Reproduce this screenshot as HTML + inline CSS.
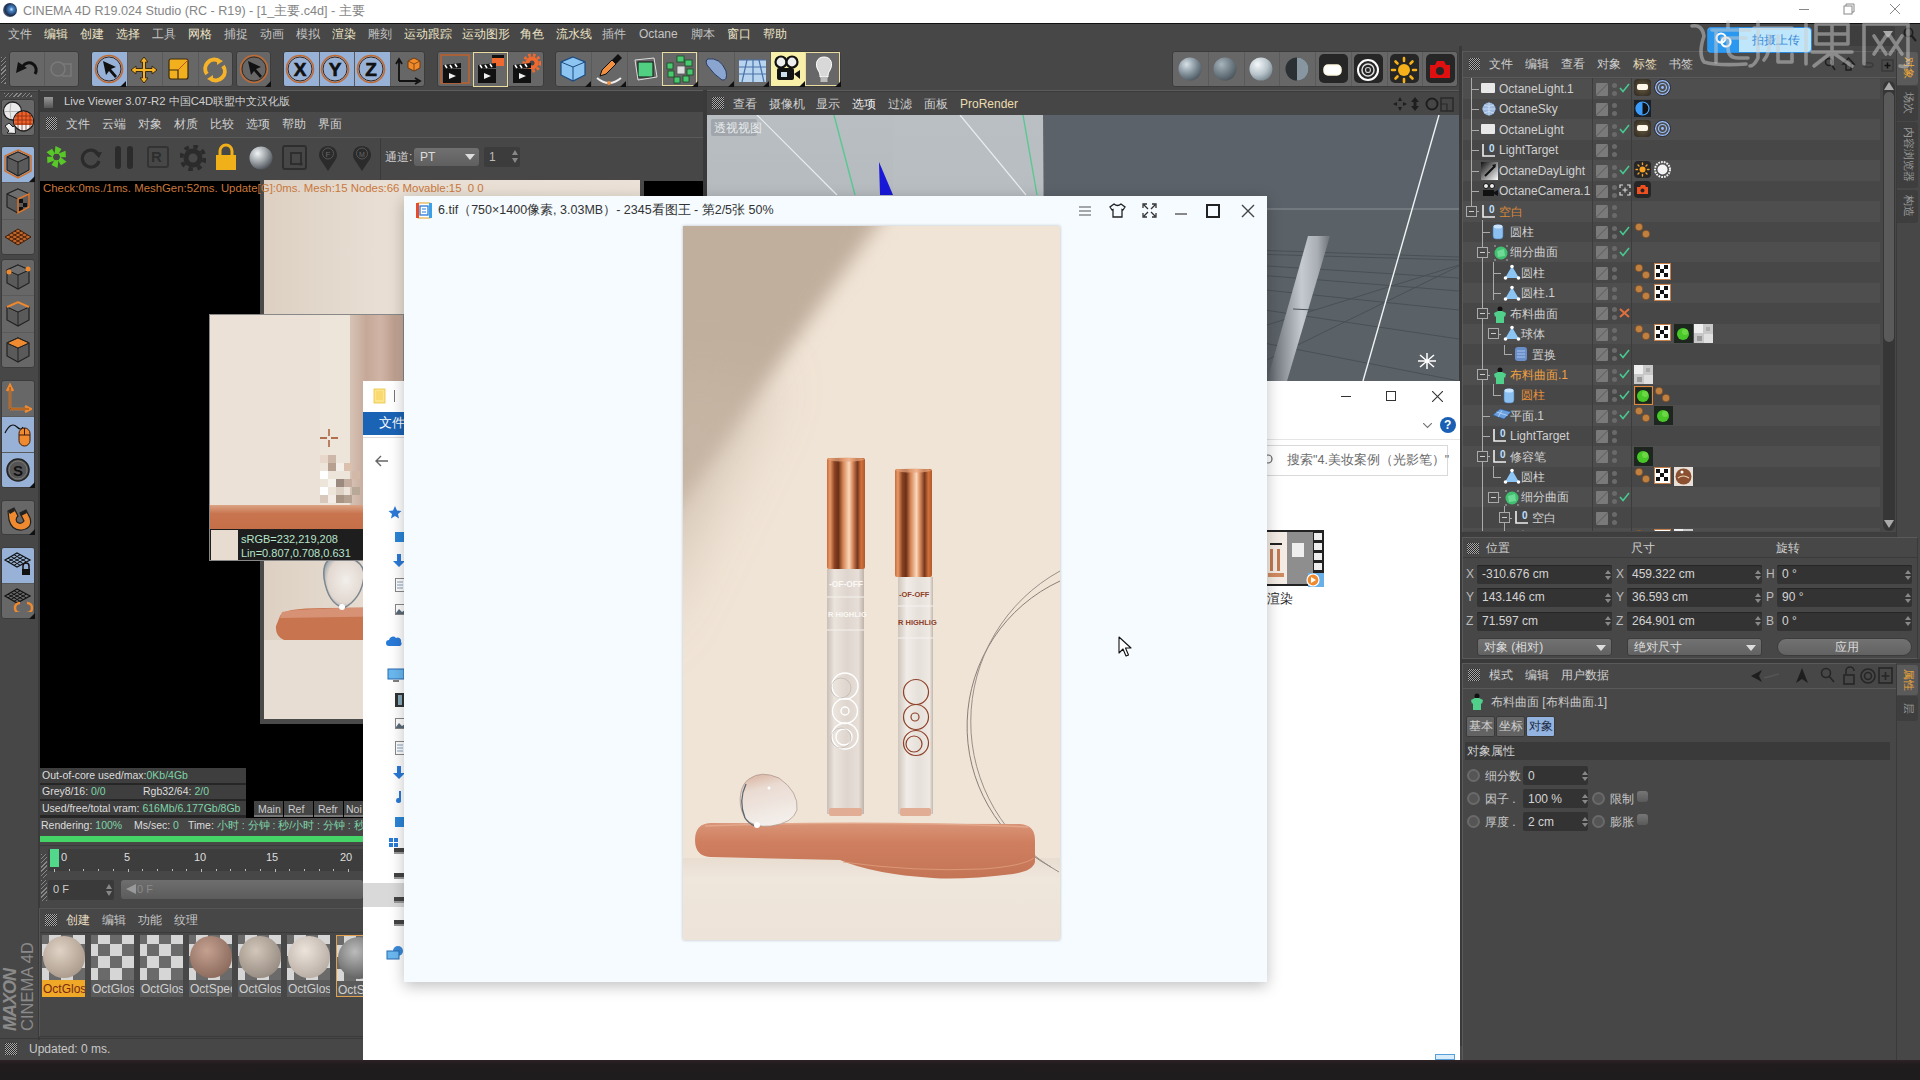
<!DOCTYPE html><html><head><meta charset="utf-8"><style>
*{box-sizing:border-box;margin:0;padding:0}
html,body{width:1920px;height:1080px;overflow:hidden;background:#474747;font-family:"Liberation Sans",sans-serif;}
.a{position:absolute}
.t{position:absolute;white-space:nowrap;line-height:1}
</style></head><body>
<div class="a" style="left:0;top:0;width:1920px;height:23px;background:#fff"></div>
<div class="a" style="left:3px;top:3px;width:14px;height:14px;border-radius:50%;background:radial-gradient(circle at 60% 45%,#cfe6ff 0,#4a86c8 18%,#1a2e50 55%,#7a8088 80%)"></div>
<div class="t" style="left:23px;top:5px;font-size:12.6px;color:#858585">CINEMA 4D R19.024 Studio (RC - R19) - [1_主要.c4d] - 主要</div>
<div class="a" style="left:1799px;top:9px;width:10px;height:1px;background:#888"></div>
<div class="a" style="left:0;top:23px;width:1920px;height:1px;background:#111"></div>
<div class="t" style="left:8px;top:28px;font-size:12px;color:#c4c4c4">文件</div>
<div class="t" style="left:44px;top:28px;font-size:12px;color:#ede4c6">编辑</div>
<div class="t" style="left:80px;top:28px;font-size:12px;color:#ede4c6">创建</div>
<div class="t" style="left:116px;top:28px;font-size:12px;color:#ede4c6">选择</div>
<div class="t" style="left:152px;top:28px;font-size:12px;color:#c4c4c4">工具</div>
<div class="t" style="left:188px;top:28px;font-size:12px;color:#ede4c6">网格</div>
<div class="t" style="left:224px;top:28px;font-size:12px;color:#c4c4c4">捕捉</div>
<div class="t" style="left:260px;top:28px;font-size:12px;color:#c4c4c4">动画</div>
<div class="t" style="left:296px;top:28px;font-size:12px;color:#c4c4c4">模拟</div>
<div class="t" style="left:332px;top:28px;font-size:12px;color:#ede4c6">渲染</div>
<div class="t" style="left:368px;top:28px;font-size:12px;color:#c4c4c4">雕刻</div>
<div class="t" style="left:404px;top:28px;font-size:12px;color:#ede4c6">运动跟踪</div>
<div class="t" style="left:462px;top:28px;font-size:12px;color:#ede4c6">运动图形</div>
<div class="t" style="left:520px;top:28px;font-size:12px;color:#ede4c6">角色</div>
<div class="t" style="left:556px;top:28px;font-size:12px;color:#ede4c6">流水线</div>
<div class="t" style="left:602px;top:28px;font-size:12px;color:#c4c4c4">插件</div>
<div class="t" style="left:639px;top:28px;font-size:12px;color:#c4c4c4">Octane</div>
<div class="t" style="left:691px;top:28px;font-size:12px;color:#c4c4c4">脚本</div>
<div class="t" style="left:727px;top:28px;font-size:12px;color:#ede4c6">窗口</div>
<div class="t" style="left:763px;top:28px;font-size:12px;color:#ede4c6">帮助</div>
<div class="a" style="left:0;top:90px;width:1462px;height:1px;background:#5c5c5c"></div>
<div class="a" style="left:0;top:91px;width:1462px;height:1px;background:#3c3c3c"></div>
<div class="a" style="left:0;top:92px;width:38px;height:948px;background:#474747"></div>
<div class="a" style="left:38px;top:90px;width:2px;height:950px;background:#3a3a3a"></div>
<div class="a" style="left:40px;top:92px;width:663px;height:20px;background:#3b3b3b"></div>
<div class="a" style="left:40px;top:112px;width:663px;height:25px;background:#4a4a4a"></div>
<div class="a" style="left:40px;top:137px;width:663px;height:1px;background:#5a5a5a"></div>
<div class="a" style="left:40px;top:138px;width:663px;height:43px;background:#474747"></div>
<div class="a" style="left:40px;top:181px;width:663px;height:587px;background:#000"></div>
<div class="a" style="left:703px;top:90px;width:4px;height:300px;background:#3a3a3a"></div>
<div class="a" style="left:707px;top:92px;width:752px;height:23px;background:#464646"></div>
<div class="a" style="left:1459px;top:46px;width:3px;height:1000px;background:#3a3a3a"></div>
<div class="a" style="left:1462px;top:52px;width:436px;height:484px;background:#4a4a4a"></div>
<div class="a" style="left:1462px;top:537px;width:436px;height:125px;background:#474747"></div>
<div class="a" style="left:1462px;top:664px;width:436px;height:396px;background:#474747"></div>
<div class="a" style="left:1898px;top:52px;width:22px;height:1008px;background:#3d3d3d"></div>
<div class="a" style="left:40px;top:768px;width:206px;height:50px;background:#262626"></div>
<div class="a" style="left:40px;top:818px;width:323px;height:27px;background:#474747"></div>
<div class="a" style="left:40px;top:845px;width:323px;height:60px;background:#474747"></div>
<div class="a" style="left:40px;top:908px;width:323px;height:130px;background:#474747"></div>
<div class="a" style="left:0;top:1040px;width:363px;height:20px;background:#474747"></div>
<div class="a" style="left:0;top:1060px;width:1920px;height:20px;background:linear-gradient(#2e2326,#201c1e 4px,#1e1c1d)"></div>
<div class="a" style="left:1px;top:57px;width:5px;height:27px;background:repeating-linear-gradient(135deg,#888 0 1px,#444 1px 3px)"></div>
<div class="a" style="left:9px;top:51px;width:70px;height:36px;background:#676767;border:1px solid #3c3c3c;border-radius:3px;overflow:hidden"><div class="a" style="left:-1px;top:-1px;width:35px;height:36px;"></div><div class="a" style="left:34px;top:-1px;width:35px;height:36px;border-left:1px solid #5a5a5a;"></div></div>
<svg class="a" style="left:14px;top:58px" width="26" height="22" viewBox="0 0 26 22"><path d="M21 16 A7 7 0 1 0 9 8" fill="none" stroke="#111" stroke-width="3"/><path d="M2 15 L4 4 L13 10Z" fill="#111"/></svg>
<svg class="a" style="left:48px;top:58px" width="26" height="22" viewBox="0 0 26 22"><g fill="none" stroke="#7a7a7a" stroke-width="1.5"><ellipse cx="10" cy="11" rx="7" ry="7"/><path d="M14 6 h9 v12 h-9"/></g></svg>
<div class="a" style="left:91px;top:51px;width:142.0px;height:36px;background:#676767;border:1px solid #3c3c3c;border-radius:3px;overflow:hidden"><div class="a" style="left:-1.0px;top:-1px;width:35.5px;height:36px;background:#97b2d6;"></div><div class="a" style="left:34.5px;top:-1px;width:35.5px;height:36px;border-left:1px solid #5a5a5a;"></div><div class="a" style="left:70.0px;top:-1px;width:35.5px;height:36px;border-left:1px solid #5a5a5a;"></div><div class="a" style="left:105.5px;top:-1px;width:35.5px;height:36px;border-left:1px solid #5a5a5a;"></div></div>
<svg class="a" style="left:94px;top:54px" width="30" height="30" viewBox="0 0 30 30"><circle cx="15" cy="15" r="13.5" fill="none" stroke="#c06a34" stroke-width="1.6"/><circle cx="15" cy="15" r="12" fill="none" stroke="#3a2a20" stroke-width="1"/><path d="M9 7 L22 13 L17 15 L23 22 L21 24 L15 17 L12 21Z" fill="#111"/></svg>
<svg class="a" style="left:120px;top:81px" width="6" height="6"><path d="M6 0 L6 6 L0 6Z" fill="#111"/></svg>
<svg class="a" style="left:129px;top:55px" width="30" height="30" viewBox="0 0 30 30"><path d="M15 2 L19 7 H16.5 V13.5 H23 V11 L28 15 L23 19 V16.5 H16.5 V23 H19 L15 28 L11 23 H13.5 V16.5 H7 V19 L2 15 L7 11 V13.5 H13.5 V7 H11Z" fill="#f5b32a" stroke="#3a2a10" stroke-width="1"/></svg>
<svg class="a" style="left:168px;top:58px" width="22" height="22" viewBox="0 0 22 22"><rect x="1" y="1" width="19" height="20" rx="2" fill="#f2b01e" stroke="#3a2a10" stroke-width="1.2"/><path d="M1 12 H10 V21" fill="none" stroke="#3a2a10" stroke-width="1.2"/><path d="M10 12 L20 2" stroke="#c0521a" stroke-width="1"/></svg>
<svg class="a" style="left:201px;top:56px" width="28" height="28" viewBox="0 0 28 28"><path d="M6 18 A9 9 0 0 1 18 5" fill="none" stroke="#f5b32a" stroke-width="4"/><path d="M22 10 A9 9 0 0 1 10 23" fill="none" stroke="#f5b32a" stroke-width="4"/><path d="M16 2 L22 5 L16 9Z M12 26 L6 23 L12 19Z" fill="#f5b32a"/></svg>
<div class="a" style="left:236px;top:51px;width:35px;height:36px;background:#676767;border:1px solid #3c3c3c;border-radius:3px;overflow:hidden"><div class="a" style="left:-1px;top:-1px;width:35px;height:36px;"></div></div>
<svg class="a" style="left:239px;top:54px" width="30" height="30" viewBox="0 0 30 30"><circle cx="15" cy="15" r="13.5" fill="none" stroke="#c06a34" stroke-width="1.6"/><circle cx="15" cy="15" r="12" fill="none" stroke="#3a2a20" stroke-width="1"/><path d="M9 7 L22 13 L17 15 L23 22 L21 24 L15 17 L12 21Z" fill="#111"/></svg>
<svg class="a" style="left:265px;top:81px" width="6" height="6"><path d="M6 0 L6 6 L0 6Z" fill="#111"/></svg>
<div class="a" style="left:283px;top:51px;width:142.0px;height:36px;background:#676767;border:1px solid #3c3c3c;border-radius:3px;overflow:hidden"><div class="a" style="left:-1.0px;top:-1px;width:35.5px;height:36px;background:#97b2d6;"></div><div class="a" style="left:34.5px;top:-1px;width:35.5px;height:36px;background:#97b2d6;border-left:1px solid #5a5a5a;"></div><div class="a" style="left:70.0px;top:-1px;width:35.5px;height:36px;background:#97b2d6;border-left:1px solid #5a5a5a;"></div><div class="a" style="left:105.5px;top:-1px;width:35.5px;height:36px;border-left:1px solid #5a5a5a;"></div></div>
<svg class="a" style="left:285px;top:54px" width="30" height="30" viewBox="0 0 30 30"><circle cx="15" cy="15" r="13.5" fill="none" stroke="#c06a34" stroke-width="1.6"/><circle cx="15" cy="15" r="12" fill="none" stroke="#3a2a20" stroke-width="1"/><text x="15" y="22" text-anchor="middle" font-family="Liberation Sans" font-weight="bold" font-size="19" fill="#111" stroke="#111" stroke-width=".6">X</text></svg>
<svg class="a" style="left:320px;top:54px" width="30" height="30" viewBox="0 0 30 30"><circle cx="15" cy="15" r="13.5" fill="none" stroke="#c06a34" stroke-width="1.6"/><circle cx="15" cy="15" r="12" fill="none" stroke="#3a2a20" stroke-width="1"/><text x="15" y="22" text-anchor="middle" font-family="Liberation Sans" font-weight="bold" font-size="19" fill="#111" stroke="#111" stroke-width=".6">Y</text></svg>
<svg class="a" style="left:356px;top:54px" width="30" height="30" viewBox="0 0 30 30"><circle cx="15" cy="15" r="13.5" fill="none" stroke="#c06a34" stroke-width="1.6"/><circle cx="15" cy="15" r="12" fill="none" stroke="#3a2a20" stroke-width="1"/><text x="15" y="22" text-anchor="middle" font-family="Liberation Sans" font-weight="bold" font-size="19" fill="#111" stroke="#111" stroke-width=".6">Z</text></svg>
<svg class="a" style="left:394px;top:55px" width="28" height="30" viewBox="0 0 28 30"><path d="M5 26 V6 M2 9 L5 4 L8 9 M5 26 H24 M21 23 L26 26 L21 29" fill="none" stroke="#111" stroke-width="1.8"/><path d="M14 6 L20 3 L26 6 V13 L20 16 L14 13Z" fill="#f08a2a" stroke="#6a3a10" stroke-width="1"/><path d="M14 6 L20 9 L26 6 M20 9 V16" fill="none" stroke="#6a3a10" stroke-width=".8"/></svg>
<div class="a" style="left:437px;top:51px;width:106.5px;height:36px;background:#676767;border:1px solid #3c3c3c;border-radius:3px;overflow:hidden"><div class="a" style="left:-1.0px;top:-1px;width:35.5px;height:36px;"></div><div class="a" style="left:34.5px;top:-1px;width:35.5px;height:36px;border-left:1px solid #5a5a5a;"></div><div class="a" style="left:70.0px;top:-1px;width:35.5px;height:36px;border-left:1px solid #5a5a5a;"></div></div>
<svg class="a" style="left:439px;top:53px" width="32" height="32" viewBox="0 0 32 32"><rect x="2" y="2" width="28" height="28" fill="none" stroke="#c0602c" stroke-width="1.5"/></svg>
<svg class="a" style="left:441px;top:60px" width="24" height="24" viewBox="0 0 24 24"><rect x="2" y="9" width="18" height="14" fill="#111"/><path d="M2 5 L20 3 L20 8 L2 9Z" fill="#111"/><path d="M4 5 L6 8 M9 5 L11 8 M14 4 L16 7" stroke="#fff" stroke-width="1.6"/><path d="M8 13 L15 16 L8 19Z" fill="#eee"/></svg>
<div class="a" style="left:473px;top:52px;width:35px;height:35px;border:1px solid #e8dca0"></div>
<svg class="a" style="left:478px;top:54px" width="28" height="32" viewBox="0 0 28 32"><rect x="14" y="2" width="12" height="10" fill="#f06a30"/><rect x="14" y="1" width="12" height="3" fill="#111"/></svg>
<svg class="a" style="left:476px;top:60px" width="24" height="24" viewBox="0 0 24 24"><rect x="2" y="9" width="18" height="14" fill="#111"/><path d="M2 5 L20 3 L20 8 L2 9Z" fill="#111"/><path d="M4 5 L6 8 M9 5 L11 8 M14 4 L16 7" stroke="#fff" stroke-width="1.6"/><path d="M8 13 L15 16 L8 19Z" fill="#eee"/></svg>
<svg class="a" style="left:513px;top:53px" width="28" height="28" viewBox="0 0 28 28"><circle cx="19" cy="10" r="6.5" fill="#f06a30"/><circle cx="19" cy="10" r="8" fill="none" stroke="#f06a30" stroke-width="3" stroke-dasharray="2.6 2.2"/><circle cx="19" cy="10" r="2.5" fill="#474747"/></svg>
<svg class="a" style="left:511px;top:60px" width="24" height="24" viewBox="0 0 24 24"><rect x="2" y="9" width="18" height="14" fill="#111"/><path d="M2 5 L20 3 L20 8 L2 9Z" fill="#111"/><path d="M4 5 L6 8 M9 5 L11 8 M14 4 L16 7" stroke="#fff" stroke-width="1.6"/><path d="M8 13 L15 16 L8 19Z" fill="#eee"/></svg>
<div class="a" style="left:555px;top:51px;width:286.0px;height:36px;background:#676767;border:1px solid #3c3c3c;border-radius:3px;overflow:hidden"><div class="a" style="left:-1.0px;top:-1px;width:35.75px;height:36px;"></div><div class="a" style="left:34.75px;top:-1px;width:35.75px;height:36px;border-left:1px solid #5a5a5a;"></div><div class="a" style="left:70.5px;top:-1px;width:35.75px;height:36px;border-left:1px solid #5a5a5a;"></div><div class="a" style="left:106.25px;top:-1px;width:35.75px;height:36px;border-left:1px solid #5a5a5a;"></div><div class="a" style="left:142.0px;top:-1px;width:35.75px;height:36px;border-left:1px solid #5a5a5a;"></div><div class="a" style="left:177.75px;top:-1px;width:35.75px;height:36px;border-left:1px solid #5a5a5a;"></div><div class="a" style="left:213.5px;top:-1px;width:35.75px;height:36px;background:#f8f0a8;border-left:1px solid #5a5a5a;"></div><div class="a" style="left:249.25px;top:-1px;width:35.75px;height:36px;border-left:1px solid #5a5a5a;"></div></div>
<div class="a" style="left:662px;top:52px;width:35px;height:34px;border:1px solid #e8dca0"></div>
<div class="a" style="left:805px;top:52px;width:35px;height:34px;border:1px solid #e8dca0"></div>
<svg class="a" style="left:559px;top:55px" width="28" height="28" viewBox="0 0 28 28"><path d="M14 2 L26 7 V20 L14 26 L2 20 V7Z" fill="#8cc4f2" stroke="#1a4a80" stroke-width="1.2"/><path d="M2 7 L14 12 L26 7 M14 12 V26" fill="none" stroke="#1a4a80" stroke-width="1"/></svg>
<svg class="a" style="left:594px;top:54px" width="30" height="32" viewBox="0 0 30 32"><path d="M8 16 L18 6 L22 10 L12 20 L6 22Z" fill="#f09040" stroke="#111" stroke-width="1"/><path d="M18 6 L24 0 L28 4 L22 10Z" fill="#111"/><path d="M3 24 Q15 34 27 24" fill="none" stroke="#eee" stroke-width="2"/><circle cx="15" cy="29" r="2" fill="#f09040"/></svg>
<svg class="a" style="left:632px;top:55px" width="28" height="28" viewBox="0 0 28 28"><rect x="6" y="7" width="15" height="15" fill="#50d080" stroke="#111" stroke-width="1"/><path d="M3 5 L22 3 L25 22 L6 25Z" fill="none" stroke="#ddd" stroke-width="1"/></svg>
<svg class="a" style="left:665px;top:54px" width="30" height="32" viewBox="0 0 30 32"><g fill="#48c870" stroke="#1a4a20" stroke-width=".8"><rect x="12" y="2" width="7" height="6"/><rect x="20" y="6" width="7" height="6"/><rect x="22" y="15" width="6" height="6"/><rect x="18" y="22" width="6" height="6"/><rect x="9" y="23" width="6" height="6"/><rect x="3" y="17" width="6" height="6"/><rect x="2" y="9" width="6" height="6"/></g><rect x="12" y="12" width="8" height="8" fill="#ddd" stroke="#555" stroke-width=".8"/></svg>
<svg class="a" style="left:702px;top:55px" width="28" height="28" viewBox="0 0 28 28"><path d="M6 4 Q18 2 24 16 Q26 26 20 25 Q12 20 5 10 Q3 5 6 4Z" fill="#8aa6d0" stroke="#2a3a60" stroke-width="1"/></svg>
<svg class="a" style="left:738px;top:56px" width="30" height="28" viewBox="0 0 30 28"><rect x="1" y="4" width="27" height="22" fill="#b9d4ef"/><g stroke="#4a72a8" stroke-width="1.2" fill="none"><path d="M1 4 H28 M1 11 H28 M1 18 H28 M9 4 L4 26 M15 4 V26 M21 4 L26 26"/></g></svg>
<svg class="a" style="left:772px;top:55px" width="30" height="30" viewBox="0 0 30 30"><circle cx="9" cy="7" r="5.5" fill="#eee" stroke="#111" stroke-width="2.2"/><circle cx="20" cy="7" r="5.5" fill="#eee" stroke="#111" stroke-width="2.2"/><rect x="5" y="13" width="17" height="12" rx="2" fill="#111"/><path d="M22 19 L28 15 V24Z" fill="#111"/><rect x="9" y="17" width="6" height="5" fill="#cde"/></svg>
<svg class="a" style="left:812px;top:55px" width="24" height="30" viewBox="0 0 24 30"><path d="M12 2 C4 2 3 10 6 15 C8 18 8 20 8 22 H16 C16 20 16 18 18 15 C21 10 20 2 12 2Z" fill="#d8d8d8" stroke="#fff" stroke-width="1"/><rect x="8.5" y="22" width="7" height="5" fill="#bbb"/></svg>
<svg class="a" style="left:620px;top:81px" width="6" height="6"><path d="M6 0 L6 6 L0 6Z" fill="#111"/></svg>
<svg class="a" style="left:692px;top:81px" width="6" height="6"><path d="M6 0 L6 6 L0 6Z" fill="#111"/></svg>
<svg class="a" style="left:728px;top:81px" width="6" height="6"><path d="M6 0 L6 6 L0 6Z" fill="#111"/></svg>
<svg class="a" style="left:763px;top:81px" width="6" height="6"><path d="M6 0 L6 6 L0 6Z" fill="#111"/></svg>
<svg class="a" style="left:799px;top:81px" width="6" height="6"><path d="M6 0 L6 6 L0 6Z" fill="#111"/></svg>
<svg class="a" style="left:835px;top:81px" width="6" height="6"><path d="M6 0 L6 6 L0 6Z" fill="#111"/></svg>
<svg class="a" style="left:585px;top:81px" width="6" height="6"><path d="M6 0 L6 6 L0 6Z" fill="#111"/></svg>
<div class="a" style="left:1172px;top:51px;width:286.0px;height:36px;background:#676767;border:1px solid #3c3c3c;border-radius:3px;overflow:hidden"><div class="a" style="left:-1.0px;top:-1px;width:35.75px;height:36px;"></div><div class="a" style="left:34.75px;top:-1px;width:35.75px;height:36px;border-left:1px solid #5a5a5a;"></div><div class="a" style="left:70.5px;top:-1px;width:35.75px;height:36px;border-left:1px solid #5a5a5a;"></div><div class="a" style="left:106.25px;top:-1px;width:35.75px;height:36px;border-left:1px solid #5a5a5a;"></div><div class="a" style="left:142.0px;top:-1px;width:35.75px;height:36px;border-left:1px solid #5a5a5a;"></div><div class="a" style="left:177.75px;top:-1px;width:35.75px;height:36px;border-left:1px solid #5a5a5a;"></div><div class="a" style="left:213.5px;top:-1px;width:35.75px;height:36px;border-left:1px solid #5a5a5a;"></div><div class="a" style="left:249.25px;top:-1px;width:35.75px;height:36px;border-left:1px solid #5a5a5a;"></div></div>
<svg class="a" style="left:1177px;top:56px" width="26" height="26" viewBox="0 0 26 26"><defs><radialGradient id="s1177" cx=".35" cy=".3" r=".75"><stop offset="0" stop-color="#d6e0e6"/><stop offset=".6" stop-color="#7e8c96"/><stop offset="1" stop-color="#4d5860"/></radialGradient></defs><circle cx="13" cy="13" r="11.5" fill="url(#s1177)"/></svg>
<svg class="a" style="left:1212px;top:56px" width="26" height="26" viewBox="0 0 26 26"><defs><radialGradient id="s1212" cx=".35" cy=".3" r=".75"><stop offset="0" stop-color="#a8b4bc"/><stop offset=".6" stop-color="#6f7b84"/><stop offset="1" stop-color="#4a545b"/></radialGradient></defs><circle cx="13" cy="13" r="11.5" fill="url(#s1212)"/></svg>
<svg class="a" style="left:1248px;top:56px" width="26" height="26" viewBox="0 0 26 26"><defs><radialGradient id="s1248" cx=".35" cy=".3" r=".75"><stop offset="0" stop-color="#f4f8fa"/><stop offset=".6" stop-color="#b8c4ca"/><stop offset="1" stop-color="#7a8890"/></radialGradient></defs><circle cx="13" cy="13" r="11.5" fill="url(#s1248)"/></svg>
<svg class="a" style="left:1284px;top:56px" width="26" height="26" viewBox="0 0 26 26"><circle cx="13" cy="13" r="11.5" fill="#2a3034"/><path d="M13 1.5 A11.5 11.5 0 0 1 13 24.5Z" fill="#8796a0"/></svg>
<div class="a" style="left:1318.5px;top:54px;width:29px;height:29px;border-radius:5px;background:#262626"></div>
<div class="a" style="left:1354.2px;top:54px;width:29px;height:29px;border-radius:5px;background:#262626"></div>
<div class="a" style="left:1390.0px;top:54px;width:29px;height:29px;border-radius:5px;background:#262626"></div>
<div class="a" style="left:1425.8px;top:54px;width:29px;height:29px;border-radius:5px;background:#262626"></div>
<svg class="a" style="left:1318px;top:60px" width="30" height="20" viewBox="0 0 30 20"><rect x="6" y="5" width="17" height="10" rx="4" fill="#fff" stroke="#fff8e0" stroke-width="1.5"/></svg>
<svg class="a" style="left:1354px;top:56px" width="28" height="28" viewBox="0 0 28 28"><circle cx="14" cy="14" r="10" fill="none" stroke="#fff" stroke-width="2"/><circle cx="14" cy="14" r="6" fill="none" stroke="#ddd" stroke-width="1.5"/><circle cx="14" cy="14" r="2.5" fill="none" stroke="#ccc" stroke-width="1.2"/></svg>
<svg class="a" style="left:1390px;top:56px" width="28" height="28" viewBox="0 0 28 28"><circle cx="14" cy="14" r="6" fill="#f5b01a"/><g stroke="#f5b01a" stroke-width="2.6" stroke-linecap="round"><path d="M14 2 V5 M14 23 V26 M2 14 H5 M23 14 H26 M5.5 5.5 L7.5 7.5 M20.5 20.5 L22.5 22.5 M5.5 22.5 L7.5 20.5 M20.5 7.5 L22.5 5.5"/></g></svg>
<svg class="a" style="left:1426px;top:56px" width="28" height="28" viewBox="0 0 28 28"><path d="M4 9 H9 L11 5 H18 L20 9 H24 V22 H4Z" fill="#e01010"/><circle cx="14" cy="15" r="4" fill="#262626"/></svg>
<div class="a" style="left:44px;top:97px;width:9px;height:11px;background:linear-gradient(#999,#555)"></div>
<div class="t" style="left:64px;top:96px;font-size:11.3px;color:#cfcfcf">Live Viewer 3.07-R2 中国C4D联盟中文汉化版</div>
<div class="a" style="left:46px;top:117px;width:11px;height:13px;background:repeating-conic-gradient(#a8a8a8 0 25%,#262626 0 50%) 0 0/2px 2px"></div>
<div class="t" style="left:66px;top:118px;font-size:12px;color:#cfcfcf">文件</div>
<div class="t" style="left:102px;top:118px;font-size:12px;color:#cfcfcf">云端</div>
<div class="t" style="left:138px;top:118px;font-size:12px;color:#cfcfcf">对象</div>
<div class="t" style="left:174px;top:118px;font-size:12px;color:#cfcfcf">材质</div>
<div class="t" style="left:210px;top:118px;font-size:12px;color:#cfcfcf">比较</div>
<div class="t" style="left:246px;top:118px;font-size:12px;color:#cfcfcf">选项</div>
<div class="t" style="left:282px;top:118px;font-size:12px;color:#cfcfcf">帮助</div>
<div class="t" style="left:318px;top:118px;font-size:12px;color:#cfcfcf">界面</div>
<svg class="a" style="left:44px;top:144px" width="25" height="26" viewBox="0 0 25 26"><g transform="translate(0.5,1)"><g transform="rotate(0 12 12)"><path d="M10 9 L11 1 L17 4 L14 9Z" fill="#58c828"/></g><g transform="rotate(60 12 12)"><path d="M10 9 L11 1 L17 4 L14 9Z" fill="#58c828"/></g><g transform="rotate(120 12 12)"><path d="M10 9 L11 1 L17 4 L14 9Z" fill="#58c828"/></g><g transform="rotate(180 12 12)"><path d="M10 9 L11 1 L17 4 L14 9Z" fill="#58c828"/></g><g transform="rotate(240 12 12)"><path d="M10 9 L11 1 L17 4 L14 9Z" fill="#58c828"/></g><g transform="rotate(300 12 12)"><path d="M10 9 L11 1 L17 4 L14 9Z" fill="#58c828"/></g><circle cx="12" cy="12" r="3.2" fill="#474747"/></g></svg>
<svg class="a" style="left:79px;top:146px" width="24" height="23" viewBox="0 0 24 23"><path d="M19 8 A8.5 8.5 0 1 0 20 15" fill="none" stroke="#2b2b2b" stroke-width="3.2"/><path d="M15 7 L23 6 L20 12Z" fill="#2b2b2b"/></svg>
<div class="a" style="left:115px;top:146px;width:6px;height:23px;border-radius:3px;background:#2b2b2b"></div>
<div class="a" style="left:127px;top:146px;width:6px;height:23px;border-radius:3px;background:#2b2b2b"></div>
<div class="a" style="left:147px;top:146px;width:22px;height:22px;border:2px solid #333;border-radius:3px"></div>
<div class="t" style="left:151px;top:149px;font-size:15px;font-weight:bold;color:#2e2e2e">R</div>
<svg class="a" style="left:180px;top:145px" width="26" height="26" viewBox="0 0 26 26"><circle cx="13" cy="13" r="9.5" fill="#2b2b2b"/><circle cx="13" cy="13" r="11.5" fill="none" stroke="#2b2b2b" stroke-width="4" stroke-dasharray="4.5 4.53"/><circle cx="13" cy="13" r="4.5" fill="#474747"/></svg>
<svg class="a" style="left:214px;top:143px" width="24" height="28" viewBox="0 0 24 28"><path d="M6 12 V8 A6 6 0 0 1 18 8 V12" fill="none" stroke="#f0b01a" stroke-width="3"/><rect x="2" y="12" width="20" height="15" fill="#f0b01a"/></svg>
<svg class="a" style="left:248px;top:145px" width="26" height="26" viewBox="0 0 26 26"><defs><radialGradient id="s248" cx=".35" cy=".3" r=".75"><stop offset="0" stop-color="#f2f4f6"/><stop offset=".5" stop-color="#a0a6aa"/><stop offset="1" stop-color="#4a5056"/></radialGradient></defs><circle cx="13" cy="13" r="11.5" fill="url(#s248)"/></svg>
<div class="a" style="left:282px;top:145px;width:25px;height:25px;border:2px solid #2e2e2e;border-radius:3px"></div>
<svg class="a" style="left:282px;top:145px" width="25" height="25" viewBox="0 0 25 25"><path d="M9 8 H19 V19 H9Z" fill="none" stroke="#2e2e2e" stroke-width="2"/><circle cx="19" cy="19" r="1.8" fill="#2e2e2e"/></svg>
<svg class="a" style="left:317px;top:144px" width="22" height="28" viewBox="0 0 22 28"><path d="M11 27 L3 15 A9 9 0 1 1 19 15Z" fill="#2b2b2b"/><circle cx="11" cy="9.5" r="5.5" fill="none" stroke="#555" stroke-width="1"/><text x="11" y="13" text-anchor="middle" font-family="Liberation Sans" font-size="8" fill="#666">F</text></svg>
<svg class="a" style="left:351px;top:144px" width="22" height="28" viewBox="0 0 22 28"><path d="M11 27 L3 15 A9 9 0 1 1 19 15Z" fill="#2b2b2b"/><circle cx="11" cy="9.5" r="5.5" fill="none" stroke="#555" stroke-width="1"/><text x="11" y="12.5" text-anchor="middle" font-family="Liberation Sans" font-size="7" fill="#666">M</text></svg>
<div class="a" style="left:380px;top:138px;width:1px;height:42px;background:#3a3a3a"></div>
<div class="t" style="left:385px;top:151px;font-size:12px;color:#cfcfcf">通道:</div>
<div class="a" style="left:414px;top:148px;width:65px;height:18px;border-radius:3px;background:linear-gradient(#707070,#5f5f5f)"></div>
<div class="t" style="left:420px;top:151px;font-size:12px;color:#ddd">PT</div>
<svg class="a" style="left:465px;top:154px" width="10" height="6" viewBox="0 0 10 6"><path d="M0 0 H10 L5 6Z" fill="#ddd"/></svg>
<div class="a" style="left:484px;top:147px;width:36px;height:20px;border-radius:2px;background:#3c3c3c"></div>
<div class="t" style="left:489px;top:151px;font-size:12px;color:#bbb">1</div>
<svg class="a" style="left:512px;top:150px" width="6" height="13" viewBox="0 0 6 13"><path d="M0 5 L3 0 L6 5Z M0 8 L3 13 L6 8Z" fill="#888"/></svg>
<div class="a" style="left:4px;top:93px;width:28px;height:4px;background:repeating-linear-gradient(135deg,#888 0 1px,#444 1px 3px)"></div>
<div class="a" style="left:1px;top:99px;width:34px;height:36.5px;background:#676767;border:1px solid #3c3c3c;border-radius:3px;overflow:hidden"><div class="a" style="left:-1px;top:-1.0px;width:34px;height:36.5px;"></div></div>
<svg class="a" style="left:1px;top:99px" width="34" height="36" viewBox="0 0 34 36"><defs><clipPath id="osc"><circle cx="22.5" cy="22" r="9.5"/></clipPath></defs><circle cx="11.5" cy="12" r="9" fill="#eaeaea" stroke="#1e1e1e" stroke-width="1.3"/><path d="M10 3.5 Q8 12 10 20 M3 12.5 H20" stroke="#aaa" stroke-width=".8" fill="none"/><path d="M4 27 L8 24 L12 28 L14 26 L14.5 34.5 L6 34 L8 32Z" fill="#eee" stroke="#222" stroke-width="1"/><circle cx="22.5" cy="22" r="10" fill="#f2f2f2" stroke="#1e1e1e" stroke-width="1.3"/><g clip-path="url(#osc)"><rect x="12" y="12" width="21" height="14" fill="#f0602a"/><path d="M17 12 V32 M21 12 V32 M25 12 V32 M29 12 V32 M12 17 H33 M12 21 H33 M12 25 H33" stroke="#7a2a10" stroke-width=".7"/></g></svg>
<div class="a" style="left:1px;top:146px;width:34px;height:108.89999999999999px;background:#676767;border:1px solid #3c3c3c;border-radius:3px;overflow:hidden"><div class="a" style="left:-1px;top:-1.0px;width:34px;height:36.3px;background:#97b2d6;"></div><div class="a" style="left:-1px;top:35.3px;width:34px;height:36.3px;border-top:1px solid #5a5a5a;"></div><div class="a" style="left:-1px;top:71.6px;width:34px;height:36.3px;border-top:1px solid #5a5a5a;"></div></div>
<svg class="a" style="left:4px;top:149px" width="28" height="30" viewBox="0 0 28 30"><path d="M14 3 L25 8 V21 L14 27 L3 21 V8Z" fill="#5a5a5a" stroke="#222" stroke-width="1.2"/><path d="M3 8 L14 13 L25 8 M14 13 V27" fill="none" stroke="#222" stroke-width="1"/><path d="M3 8 L14 3 L25 8 L14 13Z" fill="#6e6e6e" stroke="#222" stroke-width="1"/><path d="M14 1 L27 7 V22 L14 29 L1 22 V7Z" fill="none" stroke="#d0702c" stroke-width="1.5"/></svg>
<svg class="a" style="left:29px;top:176px" width="6" height="6"><path d="M6 0 L6 6 L0 6Z" fill="#111"/></svg>
<svg class="a" style="left:4px;top:186px" width="28" height="30" viewBox="0 0 28 30"><path d="M14 3 L25 8 V21 L14 27 L3 21 V8Z" fill="#5a5a5a" stroke="#222" stroke-width="1.2"/><path d="M3 8 L14 13 L25 8 M14 13 V27" fill="none" stroke="#222" stroke-width="1"/><path d="M3 8 L14 3 L25 8 L14 13Z" fill="#6e6e6e" stroke="#222" stroke-width="1"/><g fill="#111"><rect x="15" y="13" width="4" height="4"/><rect x="19" y="17" width="4" height="4"/><rect x="15" y="21" width="4" height="4"/></g><path d="M14 13 L25 8 V21 L14 27Z" fill="none" stroke="#e07a30" stroke-width="1.5"/></svg>
<svg class="a" style="left:3px;top:224px" width="30" height="26" viewBox="0 0 30 26"><path d="M2 13 L15 5 L28 13 L15 21Z" fill="#c06428" stroke="#3a1a08" stroke-width="1"/><g stroke="#3a1a08" stroke-width=".9"><path d="M5.2 11 L18.2 19 M8.5 9 L21.5 17 M11.7 7 L24.7 15 M5.2 15 L18.2 7 M8.5 17 L21.5 9 M11.7 19 L24.7 11"/></g></svg>
<div class="a" style="left:1px;top:259px;width:34px;height:108.89999999999999px;background:#676767;border:1px solid #3c3c3c;border-radius:3px;overflow:hidden"><div class="a" style="left:-1px;top:-1.0px;width:34px;height:36.3px;"></div><div class="a" style="left:-1px;top:35.3px;width:34px;height:36.3px;border-top:1px solid #5a5a5a;"></div><div class="a" style="left:-1px;top:71.6px;width:34px;height:36.3px;border-top:1px solid #5a5a5a;"></div></div>
<svg class="a" style="left:4px;top:262px" width="28" height="30" viewBox="0 0 28 30"><path d="M14 3 L25 8 V21 L14 27 L3 21 V8Z" fill="#5a5a5a" stroke="#222" stroke-width="1.2"/><path d="M3 8 L14 13 L25 8 M14 13 V27" fill="none" stroke="#222" stroke-width="1"/><path d="M3 8 L14 3 L25 8 L14 13Z" fill="#6e6e6e" stroke="#222" stroke-width="1"/><circle cx="5" cy="10" r="2.5" fill="#f08a30"/><circle cx="24" cy="7" r="2.5" fill="#f08a30"/></svg>
<svg class="a" style="left:4px;top:299px" width="28" height="30" viewBox="0 0 28 30"><path d="M14 3 L25 8 V21 L14 27 L3 21 V8Z" fill="#5a5a5a" stroke="#222" stroke-width="1.2"/><path d="M3 8 L14 13 L25 8 M14 13 V27" fill="none" stroke="#222" stroke-width="1"/><path d="M3 8 L14 3 L25 8 L14 13Z" fill="#6e6e6e" stroke="#222" stroke-width="1"/><path d="M3 8 L14 3 L25 8" fill="none" stroke="#f08a30" stroke-width="2"/></svg>
<svg class="a" style="left:4px;top:335px" width="28" height="30" viewBox="0 0 28 30"><path d="M14 3 L25 8 V21 L14 27 L3 21 V8Z" fill="#5a5a5a" stroke="#222" stroke-width="1.2"/><path d="M3 8 L14 13 L25 8 M14 13 V27" fill="none" stroke="#222" stroke-width="1"/><path d="M3 8 L14 3 L25 8 L14 13Z" fill="#6e6e6e" stroke="#222" stroke-width="1"/><path d="M3 8 L14 3 L25 8 L14 13Z" fill="#f08a30" stroke="#222" stroke-width="1"/></svg>
<div class="a" style="left:1px;top:380px;width:34px;height:108px;background:#676767;border:1px solid #3c3c3c;border-radius:3px;overflow:hidden"><div class="a" style="left:-1px;top:-1px;width:34px;height:36px;"></div><div class="a" style="left:-1px;top:35px;width:34px;height:36px;background:#97b2d6;border-top:1px solid #5a5a5a;"></div><div class="a" style="left:-1px;top:71px;width:34px;height:36px;background:#97b2d6;border-top:1px solid #5a5a5a;"></div></div>
<svg class="a" style="left:4px;top:383px" width="28" height="30" viewBox="0 0 28 30"><path d="M6 26 V4 M3 8 L6 2 L9 8 M6 26 H25 M21 23 L27 26 L21 29" fill="none" stroke="#f08a30" stroke-width="2.4"/><path d="M6 26 V4 M6 26 H25" fill="none" stroke="#3a1a08" stroke-width=".6"/></svg>
<svg class="a" style="left:3px;top:419px" width="30" height="30" viewBox="0 0 30 30"><path d="M2 14 Q8 2 14 8 Q18 12 20 8" fill="none" stroke="#111" stroke-width="1.2"/><rect x="16" y="9" width="11" height="18" rx="5.5" fill="#f08a30" stroke="#3a1a08" stroke-width="1"/><path d="M21.5 9 V16 M16 16 H27" stroke="#3a1a08" stroke-width="1"/></svg>
<svg class="a" style="left:4px;top:455px" width="28" height="30" viewBox="0 0 28 30"><circle cx="14" cy="15" r="11" fill="#555" stroke="#222" stroke-width="1.5"/><circle cx="14" cy="15" r="9" fill="none" stroke="#777" stroke-width="1"/><text x="14" y="21" text-anchor="middle" font-family="Liberation Sans" font-weight="bold" font-size="15" fill="#111">S</text></svg>
<svg class="a" style="left:29px;top:482px" width="6" height="6"><path d="M6 0 L6 6 L0 6Z" fill="#111"/></svg>
<div class="a" style="left:1px;top:500px;width:34px;height:35px;background:#676767;border:1px solid #3c3c3c;border-radius:3px;overflow:hidden"><div class="a" style="left:-1px;top:-1px;width:34px;height:35px;"></div></div>
<svg class="a" style="left:4px;top:503px" width="28" height="28" viewBox="0 0 28 28"><path d="M4 8 L10 5 L14 13 Q11 16 13 19 Q17 22 20 18 L16 10 L22 7 L26 15 Q29 25 18 27 Q8 28 5 17Z" fill="#f08a30" stroke="#222" stroke-width="1.2"/><path d="M4 8 L10 5 L11 8 L6 11Z M22 7 L16 10 L17 13 L23 10Z" fill="#222"/></svg>
<svg class="a" style="left:29px;top:529px" width="6" height="6"><path d="M6 0 L6 6 L0 6Z" fill="#111"/></svg>
<div class="a" style="left:1px;top:547px;width:34px;height:72px;background:#676767;border:1px solid #3c3c3c;border-radius:3px;overflow:hidden"><div class="a" style="left:-1px;top:-1px;width:34px;height:36px;background:#97b2d6;"></div><div class="a" style="left:-1px;top:35px;width:34px;height:36px;border-top:1px solid #5a5a5a;"></div></div>
<svg class="a" style="left:3px;top:550px" width="30" height="26" viewBox="0 0 30 26"><path d="M2 10 L14 3 L27 10 L14 17Z" fill="none" stroke="#111" stroke-width="1.2"/><g stroke="#111" stroke-width="1"><path d="M5 8.2 L17 15.2 M8 6.5 L20 13.5 M11 4.7 L23 11.7 M5 11.8 L17 4.8 M8 13.5 L20 6.5 M11 15.3 L23 8.3"/></g><rect x="19" y="19" width="8" height="6" fill="#111"/><path d="M20 19 V16 A3 3 0 0 1 26 16 V19" fill="none" stroke="#111" stroke-width="1.5"/></svg>
<svg class="a" style="left:3px;top:586px" width="30" height="26" viewBox="0 0 30 26"><path d="M2 10 L14 3 L27 10 L14 17Z" fill="none" stroke="#111" stroke-width="1.2"/><g stroke="#111" stroke-width="1"><path d="M5 8.2 L17 15.2 M8 6.5 L20 13.5 M11 4.7 L23 11.7 M5 11.8 L17 4.8 M8 13.5 L20 6.5 M11 15.3 L23 8.3"/></g><path d="M17 17 A5 5 0 0 0 17 27 M24 17 A5 5 0 0 1 24 27" fill="none" stroke="#f08a30" stroke-width="2.5"/></svg>
<svg class="a" style="left:29px;top:613px" width="6" height="6"><path d="M6 0 L6 6 L0 6Z" fill="#111"/></svg>
<div class="t" style="left:1px;top:1031px;transform:rotate(-90deg);transform-origin:0 0;font-size:18px;font-weight:bold;font-style:italic;color:#8a8a8a;letter-spacing:-1px;line-height:18px">MAXON</div>
<div class="t" style="left:19px;top:1031px;transform:rotate(-90deg);transform-origin:0 0;font-size:16.5px;color:#8a8a8a;line-height:17px">CINEMA 4D</div>
<div class="a" style="left:260px;top:180px;width:384px;height:544px;background:#4a4a4a"></div>
<svg class="a" style="left:264px;top:180px" width="376" height="539" viewBox="0 0 376 539"><defs><linearGradient id="rimg" x1="0" y1="0" x2="1" y2="0"><stop offset="0" stop-color="#ddd0c3"/><stop offset=".3" stop-color="#e8ded3"/><stop offset="1" stop-color="#ebe1d6"/></linearGradient><radialGradient id="rdrop" cx=".55" cy=".45" r=".6"><stop offset="0" stop-color="#f2eeea"/><stop offset=".75" stop-color="#e2d8d0"/><stop offset="1" stop-color="#9aa4ac"/></radialGradient></defs><rect width="376" height="539" fill="url(#rimg)"/><rect x="0" y="460" width="376" height="79" fill="#e7ddd3"/><path d="M16 436 Q18 428 60 428 L376 426 L376 460 L20 460 Q11 456 12 446Z" fill="#c8754f"/><path d="M18 432 Q40 426 376 424 L376 432 L16 438Z" fill="#d79276"/><path d="M60 398 Q58 378 72 378 Q100 376 100 396 Q98 418 80 428 Q64 424 60 398Z" fill="url(#rdrop)" stroke="#7a8690" stroke-width="1.5"/><circle cx="78" cy="427" r="3" fill="#fff"/></svg>
<div class="t" style="left:43px;top:183px;font-size:11.4px;color:#c8783c">Check:0ms./1ms. MeshGen:52ms. Update[G]:0ms. Mesh:15 Nodes:66 Movable:15 &nbsp;0 0</div>
<div class="a" style="left:209px;top:314px;width:195px;height:247px;background:#ebe1d6;border:1px solid #888;overflow:hidden"><div class="a" style="left:110px;top:0;width:32px;height:193px;background:#ede4da"></div><div class="a" style="left:140px;top:0;width:55px;height:193px;background:linear-gradient(90deg,#d6c3b6,#c6a898 30%,#d0b4a5 55%,#bea090 80%,#c8ad9e)"></div><div class="a" style="left:0;top:190px;width:195px;height:25px;background:linear-gradient(#dba486,#c8744e 35%,#c56f48)"></div></div>
<svg class="a" style="left:318px;top:427px" width="22" height="22" viewBox="0 0 22 22"><path d="M11 2 V9 M11 13 V20 M2 11 H9 M13 11 H20" stroke="#a04a20" stroke-width="1.3"/></svg>
<div class="a" style="left:320px;top:455px;width:8px;height:8px;background:#e8d8cc"></div>
<div class="a" style="left:328px;top:455px;width:8px;height:8px;background:#cdb7a8"></div>
<div class="a" style="left:336px;top:463px;width:8px;height:8px;background:#f4eee8"></div>
<div class="a" style="left:328px;top:463px;width:8px;height:8px;background:#b8a090"></div>
<div class="a" style="left:344px;top:463px;width:8px;height:8px;background:#dcc0ae"></div>
<div class="a" style="left:320px;top:471px;width:8px;height:8px;background:#fff"></div>
<div class="a" style="left:328px;top:479px;width:8px;height:8px;background:#f6f2ee"></div>
<div class="a" style="left:320px;top:487px;width:8px;height:8px;background:#fff"></div>
<div class="a" style="left:336px;top:479px;width:8px;height:8px;background:#9a8a80"></div>
<div class="a" style="left:344px;top:479px;width:8px;height:8px;background:#c4ad9e"></div>
<div class="a" style="left:336px;top:487px;width:8px;height:8px;background:#ddd0c5"></div>
<div class="a" style="left:328px;top:495px;width:8px;height:8px;background:#f3ece6"></div>
<div class="a" style="left:344px;top:495px;width:8px;height:8px;background:#b5a192"></div>
<div class="a" style="left:352px;top:471px;width:8px;height:8px;background:#d2b8a6"></div>
<div class="a" style="left:352px;top:487px;width:8px;height:8px;background:#b8a898"></div>
<div class="a" style="left:320px;top:495px;width:8px;height:8px;background:#d8c8bb"></div>
<div class="a" style="left:336px;top:495px;width:8px;height:8px;background:#a89484"></div>
<div class="a" style="left:210px;top:529px;width:153px;height:31px;background:#1e1e1e"></div>
<div class="a" style="left:211px;top:530px;width:27px;height:30px;background:#e8dbd0"></div>
<div class="t" style="left:241px;top:534px;font-size:11px;color:#b8e4cc">sRGB=232,219,208</div>
<div class="t" style="left:241px;top:548px;font-size:11px;color:#b8e4cc">Lin=0.807,0.708,0.631</div>
<div class="a" style="left:40px;top:768px;width:206px;height:15px;background:#3e3e3e"></div>
<div class="a" style="left:40px;top:785px;width:206px;height:14px;background:#3e3e3e"></div>
<div class="a" style="left:40px;top:801px;width:206px;height:14px;background:#3e3e3e"></div>
<div class="a" style="left:246px;top:768px;width:117px;height:50px;background:#000"></div>
<div class="t" style="left:42px;top:770px;font-size:10.5px;color:#ddd">Out-of-core used/max:<span style="color:#7ed4a8">0Kb/4Gb</span></div>
<div class="t" style="left:42px;top:786px;font-size:10.5px;color:#ddd">Grey8/16: <span style="color:#7ed4a8">0/0</span></div>
<div class="t" style="left:143px;top:786px;font-size:10.5px;color:#ddd">Rgb32/64: <span style="color:#7ed4a8">2/0</span></div>
<div class="a" style="left:40px;top:801px;width:206px;height:15px;overflow:hidden"><div class="t" style="left:2px;top:2px;font-size:10.5px;color:#ddd">Used/free/total vram: <span style="color:#7ed4a8">616Mb/6.177Gb/8Gb</span></div></div>
<div class="a" style="left:254px;top:801px;width:29px;height:16px;background:#444;border-bottom:2px solid #777;overflow:hidden"><div class="t" style="left:4px;top:3px;font-size:10.5px;color:#ccc">Main</div></div>
<div class="a" style="left:284px;top:801px;width:29px;height:16px;background:#444;border-bottom:2px solid #777;overflow:hidden"><div class="t" style="left:4px;top:3px;font-size:10.5px;color:#ccc">Ref</div></div>
<div class="a" style="left:314px;top:801px;width:29px;height:16px;background:#444;border-bottom:2px solid #777;overflow:hidden"><div class="t" style="left:4px;top:3px;font-size:10.5px;color:#ccc">Refr</div></div>
<div class="a" style="left:344px;top:801px;width:25px;height:16px;background:#444;border-bottom:2px solid #777;overflow:hidden"><div class="t" style="left:2px;top:3px;font-size:10.5px;color:#ccc">Noi</div></div>
<div class="t" style="left:41px;top:820px;font-size:10.5px;color:#ddd">Rendering: <span style="color:#7ed4a8">100%</span></div>
<div class="t" style="left:134px;top:820px;font-size:10.5px;color:#ddd">Ms/sec: <span style="color:#7ed4a8">0</span></div>
<div class="t" style="left:188px;top:820px;font-size:10.5px;color:#ddd">Time: <span style="color:#7ed4a8">小时 : 分钟 : 秒/小时 : 分钟 : 秒</span></div>
<div class="a" style="left:40px;top:836px;width:323px;height:6px;background:#45d466"></div>
<div class="a" style="left:40px;top:845px;width:323px;height:1px;background:#3a3a3a"></div>
<div class="a" style="left:41px;top:854px;width:6px;height:24px;background:repeating-linear-gradient(135deg,#888 0 1px,#444 1px 3px)"></div>
<div class="a" style="left:48px;top:849px;width:315px;height:22px;background:#3d3d3d"></div>
<div class="a" style="left:50px;top:849px;width:9px;height:18px;background:#52d88a"></div>
<div class="t" style="left:61px;top:852px;font-size:11px;color:#ddd">0</div>
<div class="t" style="left:124px;top:852px;font-size:11px;color:#ddd">5</div>
<div class="t" style="left:194px;top:852px;font-size:11px;color:#ddd">10</div>
<div class="t" style="left:266px;top:852px;font-size:11px;color:#ddd">15</div>
<div class="t" style="left:340px;top:852px;font-size:11px;color:#ddd">20</div>
<div class="a" style="left:54.0px;top:869px;width:1px;height:3px;background:#bbb"></div>
<div class="a" style="left:68.7px;top:869px;width:1px;height:2px;background:#bbb"></div>
<div class="a" style="left:83.4px;top:869px;width:1px;height:2px;background:#bbb"></div>
<div class="a" style="left:98.1px;top:869px;width:1px;height:2px;background:#bbb"></div>
<div class="a" style="left:112.8px;top:869px;width:1px;height:2px;background:#bbb"></div>
<div class="a" style="left:127.5px;top:869px;width:1px;height:3px;background:#bbb"></div>
<div class="a" style="left:142.2px;top:869px;width:1px;height:2px;background:#bbb"></div>
<div class="a" style="left:156.9px;top:869px;width:1px;height:2px;background:#bbb"></div>
<div class="a" style="left:171.6px;top:869px;width:1px;height:2px;background:#bbb"></div>
<div class="a" style="left:186.3px;top:869px;width:1px;height:2px;background:#bbb"></div>
<div class="a" style="left:201.0px;top:869px;width:1px;height:3px;background:#bbb"></div>
<div class="a" style="left:215.7px;top:869px;width:1px;height:2px;background:#bbb"></div>
<div class="a" style="left:230.4px;top:869px;width:1px;height:2px;background:#bbb"></div>
<div class="a" style="left:245.1px;top:869px;width:1px;height:2px;background:#bbb"></div>
<div class="a" style="left:259.8px;top:869px;width:1px;height:2px;background:#bbb"></div>
<div class="a" style="left:274.5px;top:869px;width:1px;height:3px;background:#bbb"></div>
<div class="a" style="left:289.2px;top:869px;width:1px;height:2px;background:#bbb"></div>
<div class="a" style="left:303.9px;top:869px;width:1px;height:2px;background:#bbb"></div>
<div class="a" style="left:318.6px;top:869px;width:1px;height:2px;background:#bbb"></div>
<div class="a" style="left:333.3px;top:869px;width:1px;height:2px;background:#bbb"></div>
<div class="a" style="left:348.0px;top:869px;width:1px;height:3px;background:#bbb"></div>
<div class="a" style="left:362.7px;top:869px;width:1px;height:2px;background:#bbb"></div>
<div class="a" style="left:41px;top:880px;width:6px;height:21px;background:repeating-linear-gradient(135deg,#888 0 1px,#444 1px 3px)"></div>
<div class="a" style="left:48px;top:880px;width:66px;height:20px;background:#3a3a3a;border-radius:2px"></div>
<div class="t" style="left:53px;top:884px;font-size:11px;color:#ccc">0 F</div>
<svg class="a" style="left:106px;top:884px" width="6" height="12" viewBox="0 0 6 12"><path d="M0 5 L3 0 L6 5Z M0 7 L3 12 L6 7Z" fill="#888"/></svg>
<div class="a" style="left:121px;top:880px;width:242px;height:19px;border-radius:3px;background:linear-gradient(#6e6e6e,#5c5c5c)"></div>
<svg class="a" style="left:126px;top:884px" width="10" height="10" viewBox="0 0 10 10"><path d="M10 0 V10 L0 5Z" fill="#999"/></svg>
<div class="t" style="left:137px;top:884px;font-size:11px;color:#8a8a8a">0 F</div>
<div class="a" style="left:39px;top:908px;width:324px;height:129px;border-left:1px solid #555;border-top:1px solid #555;border-bottom:1px solid #3a3a3a"></div>
<div class="a" style="left:45px;top:914px;width:12px;height:12px;background:repeating-conic-gradient(#a8a8a8 0 25%,#262626 0 50%) 0 0/2px 2px"></div>
<div class="t" style="left:66px;top:914px;font-size:12px;color:#e8dcc0">创建</div>
<div class="t" style="left:102px;top:914px;font-size:12px;color:#c8c8c8">编辑</div>
<div class="t" style="left:138px;top:914px;font-size:12px;color:#c8c8c8">功能</div>
<div class="t" style="left:174px;top:914px;font-size:12px;color:#c8c8c8">纹理</div>
<div class="a" style="left:40px;top:932px;width:323px;height:1px;background:#3a3a3a"></div>
<div class="a" style="left:42px;top:935px;width:43px;height:62px;overflow:hidden;"><div class="a" style="left:0;top:0;width:43px;height:45px;background:conic-gradient(#d6d6d6 0 25%,#6a6a6a 0 50%,#d6d6d6 0 75%,#6a6a6a 0);background-size:24px 24px;background-position:-5px -3px"></div><div class="a" style="left:1px;top:1px;width:42px;height:42px;border-radius:50%;background:radial-gradient(circle at 40% 35%,#e0d2c4,#9a8a7c)"></div><div class="a" style="left:0;top:45px;width:43px;height:17px;background:#f0a828"></div><div class="t" style="left:1px;top:48px;font-size:12px;color:#7a2a10">OctGlos</div></div>
<div class="a" style="left:91px;top:935px;width:43px;height:62px;overflow:hidden;"><div class="a" style="left:0;top:0;width:43px;height:45px;background:conic-gradient(#d6d6d6 0 25%,#6a6a6a 0 50%,#d6d6d6 0 75%,#6a6a6a 0);background-size:24px 24px;background-position:-5px -3px"></div><div class="a" style="left:0;top:45px;width:43px;height:17px;background:#5a5a5a"></div><div class="t" style="left:1px;top:48px;font-size:12px;color:#d0d0d0">OctGlos</div></div>
<div class="a" style="left:140px;top:935px;width:43px;height:62px;overflow:hidden;"><div class="a" style="left:0;top:0;width:43px;height:45px;background:conic-gradient(#d6d6d6 0 25%,#6a6a6a 0 50%,#d6d6d6 0 75%,#6a6a6a 0);background-size:24px 24px;background-position:-5px -3px"></div><div class="a" style="left:0;top:45px;width:43px;height:17px;background:#5a5a5a"></div><div class="t" style="left:1px;top:48px;font-size:12px;color:#d0d0d0">OctGlos</div></div>
<div class="a" style="left:189px;top:935px;width:43px;height:62px;overflow:hidden;"><div class="a" style="left:0;top:0;width:43px;height:45px;background:conic-gradient(#d6d6d6 0 25%,#6a6a6a 0 50%,#d6d6d6 0 75%,#6a6a6a 0);background-size:24px 24px;background-position:-5px -3px"></div><div class="a" style="left:1px;top:1px;width:42px;height:42px;border-radius:50%;background:radial-gradient(circle at 40% 35%,#c4a090,#7a5a4c)"></div><div class="a" style="left:0;top:45px;width:43px;height:17px;background:#5a5a5a"></div><div class="t" style="left:1px;top:48px;font-size:12px;color:#d0d0d0">OctSpec</div></div>
<div class="a" style="left:238px;top:935px;width:43px;height:62px;overflow:hidden;"><div class="a" style="left:0;top:0;width:43px;height:45px;background:conic-gradient(#d6d6d6 0 25%,#6a6a6a 0 50%,#d6d6d6 0 75%,#6a6a6a 0);background-size:24px 24px;background-position:-5px -3px"></div><div class="a" style="left:1px;top:1px;width:42px;height:42px;border-radius:50%;background:radial-gradient(circle at 40% 35%,#d2c6ba,#857a70)"></div><div class="a" style="left:0;top:45px;width:43px;height:17px;background:#5a5a5a"></div><div class="t" style="left:1px;top:48px;font-size:12px;color:#d0d0d0">OctGlos</div></div>
<div class="a" style="left:287px;top:935px;width:43px;height:62px;overflow:hidden;"><div class="a" style="left:0;top:0;width:43px;height:45px;background:conic-gradient(#d6d6d6 0 25%,#6a6a6a 0 50%,#d6d6d6 0 75%,#6a6a6a 0);background-size:24px 24px;background-position:-5px -3px"></div><div class="a" style="left:1px;top:1px;width:42px;height:42px;border-radius:50%;background:radial-gradient(circle at 40% 35%,#ece4dc,#a89c92)"></div><div class="a" style="left:0;top:45px;width:43px;height:17px;background:#5a5a5a"></div><div class="t" style="left:1px;top:48px;font-size:12px;color:#d0d0d0">OctGlos</div></div>
<div class="a" style="left:336px;top:935px;width:28px;height:62px;overflow:hidden;border:1px solid #e0a050;"><div class="a" style="left:0;top:0;width:43px;height:45px;background:conic-gradient(#d6d6d6 0 25%,#6a6a6a 0 50%,#d6d6d6 0 75%,#6a6a6a 0);background-size:24px 24px;background-position:-5px -3px"></div><div class="a" style="left:1px;top:1px;width:42px;height:42px;border-radius:50%;background:radial-gradient(circle at 40% 35%,#bbb,#444)"></div><div class="a" style="left:0;top:45px;width:43px;height:17px;background:#5a5a5a"></div><div class="t" style="left:1px;top:48px;font-size:12px;color:#d0d0d0">OctS</div></div>
<div class="a" style="left:0;top:1038px;width:363px;height:1px;background:#3a3a3a"></div>
<div class="a" style="left:5px;top:1043px;width:12px;height:12px;background:repeating-conic-gradient(#a8a8a8 0 25%,#262626 0 50%) 0 0/2px 2px"></div>
<div class="t" style="left:29px;top:1043px;font-size:12px;color:#c8c8c8">Updated: 0 ms.</div>
<div class="a" style="left:1462px;top:51px;width:435px;height:486px;border:1px solid #5a5a5a;border-right-color:#3a3a3a"></div>
<div class="a" style="left:1469px;top:58px;width:11px;height:12px;background:repeating-conic-gradient(#a8a8a8 0 25%,#262626 0 50%) 0 0/2px 2px"></div>
<div class="t" style="left:1489px;top:58px;font-size:12px;color:#cfcfcf">文件</div>
<div class="t" style="left:1525px;top:58px;font-size:12px;color:#cfcfcf">编辑</div>
<div class="t" style="left:1561px;top:58px;font-size:12px;color:#cfcfcf">查看</div>
<div class="t" style="left:1597px;top:58px;font-size:12px;color:#cfcfcf">对象</div>
<div class="t" style="left:1633px;top:58px;font-size:12px;color:#e8dcb8">标签</div>
<div class="t" style="left:1669px;top:58px;font-size:12px;color:#cfcfcf">书签</div>
<div class="a" style="left:1463px;top:77px;width:433px;height:1px;background:#5a5a5a"></div>
<svg class="a" style="left:1822px;top:56px" width="72" height="18" viewBox="0 0 72 18"><g fill="none" stroke="#1e1e1e" stroke-width="1.5"><circle cx="7" cy="6" r="3.5"/><path d="M9.5 8.5 L13 14"/><path d="M21 8 L26.5 2 L32 8 H29 V14 H24 V8Z"/><ellipse cx="46" cy="9" rx="5" ry="2.2" stroke="#3a3a3a"/><rect x="60" y="4" width="11" height="11" stroke="#3a3a3a"/><path d="M65.5 6.5 V12.5 M62.5 9.5 H68.5" stroke="#111"/></g></svg>
<div class="a" style="left:1463px;top:78px;width:417px;height:453px;overflow:hidden">
<div class="a" style="left:-1463px;top:-78px;width:1920px;height:1080px">
<div class="a" style="left:1463px;top:78.6px;width:417px;height:20.9px;background:#4e4e4e"></div>
<div class="a" style="left:1463px;top:99.0px;width:417px;height:20.9px;background:#474747"></div>
<div class="a" style="left:1463px;top:119.4px;width:417px;height:20.9px;background:#4e4e4e"></div>
<div class="a" style="left:1463px;top:139.9px;width:417px;height:20.9px;background:#474747"></div>
<div class="a" style="left:1463px;top:160.3px;width:417px;height:20.9px;background:#4e4e4e"></div>
<div class="a" style="left:1463px;top:180.7px;width:417px;height:20.9px;background:#474747"></div>
<div class="a" style="left:1463px;top:201.1px;width:417px;height:20.9px;background:#4e4e4e"></div>
<div class="a" style="left:1463px;top:221.5px;width:417px;height:20.9px;background:#474747"></div>
<div class="a" style="left:1463px;top:242.0px;width:417px;height:20.9px;background:#4e4e4e"></div>
<div class="a" style="left:1463px;top:262.4px;width:417px;height:20.9px;background:#474747"></div>
<div class="a" style="left:1463px;top:282.8px;width:417px;height:20.9px;background:#4e4e4e"></div>
<div class="a" style="left:1463px;top:303.2px;width:417px;height:20.9px;background:#474747"></div>
<div class="a" style="left:1463px;top:323.6px;width:417px;height:20.9px;background:#4e4e4e"></div>
<div class="a" style="left:1463px;top:344.1px;width:417px;height:20.9px;background:#474747"></div>
<div class="a" style="left:1463px;top:364.5px;width:417px;height:20.9px;background:#4e4e4e"></div>
<div class="a" style="left:1463px;top:384.9px;width:417px;height:20.9px;background:#474747"></div>
<div class="a" style="left:1463px;top:405.3px;width:417px;height:20.9px;background:#4e4e4e"></div>
<div class="a" style="left:1463px;top:425.7px;width:417px;height:20.9px;background:#474747"></div>
<div class="a" style="left:1463px;top:446.2px;width:417px;height:20.9px;background:#4e4e4e"></div>
<div class="a" style="left:1463px;top:466.6px;width:417px;height:20.9px;background:#474747"></div>
<div class="a" style="left:1463px;top:487.0px;width:417px;height:20.9px;background:#4e4e4e"></div>
<div class="a" style="left:1463px;top:507.4px;width:417px;height:20.9px;background:#474747"></div>
<div class="a" style="left:1463px;top:527.8px;width:417px;height:20.9px;background:#4e4e4e"></div>
<div class="a" style="left:1471px;top:78px;width:1px;height:128px;background:#aaa"></div>
<div class="a" style="left:1482px;top:220px;width:1px;height:320px;background:#aaa"></div>
<div class="a" style="left:1493px;top:262px;width:1px;height:38px;background:#aaa"></div>
<div class="a" style="left:1504px;top:345px;width:1px;height:10px;background:#aaa"></div>
<div class="a" style="left:1493px;top:384px;width:1px;height:12px;background:#aaa"></div>
<div class="a" style="left:1493px;top:466px;width:1px;height:12px;background:#aaa"></div>
<div class="a" style="left:1504px;top:506px;width:1px;height:30px;background:#aaa"></div>
<div class="a" style="left:1471px;top:88.8px;width:8px;height:1px;background:#aaa"></div>
<div class="a" style="left:1481px;top:83px;width:14px;height:10px;background:#e8e8e8;border-radius:1px"></div>
<div class="t" style="left:1499px;top:83.0px;font-size:12px;color:#d0d0d0">OctaneLight.1</div>
<div class="a" style="left:1596px;top:82.8px;width:12px;height:13px;background:linear-gradient(135deg,#7a7a7a 46%,#5a5a5a 50%,#7a7a7a 54%);border-radius:1px"></div>
<div class="a" style="left:1612px;top:82.8px;width:5px;height:5px;border-radius:50%;background:#6a6a6a"></div>
<div class="a" style="left:1612px;top:90.8px;width:5px;height:5px;border-radius:50%;background:#6a6a6a"></div>
<svg class="a" style="left:1619px;top:83px" width="11" height="10" viewBox="0 0 11 10"><path d="M1 5 L4 8.5 L10 1" fill="none" stroke="#48c890" stroke-width="1.6"/></svg>
<div class="a" style="left:1634px;top:79px;width:17px;height:17px;border-radius:4px;background:radial-gradient(#6a5a40,#2a2620)"><div class="a" style="left:3px;top:5px;width:11px;height:6px;border-radius:2px;background:#fff8ea"></div></div>
<svg class="a" style="left:1654px;top:79px" width="17" height="17" viewBox="0 0 17 17"><circle cx="8.5" cy="8.5" r="7" fill="none" stroke="#9ac0ff" stroke-width="1.4"/><circle cx="8.5" cy="8.5" r="4" fill="none" stroke="#9ac0ff" stroke-width="1.2"/><circle cx="8.5" cy="8.5" r="1.4" fill="#9ac0ff"/><circle cx="8.5" cy="8.5" r="8" fill="none" stroke="#223" stroke-width=".8"/></svg>
<div class="a" style="left:1471px;top:109.2px;width:8px;height:1px;background:#aaa"></div>
<svg class="a" style="left:1481px;top:101px" width="16" height="16" viewBox="0 0 16 16"><circle cx="8" cy="8" r="6.5" fill="#9ab8e0"/><path d="M1.5 8 H14.5 M8 1.5 V14.5 M3 4 Q8 7 13 4 M3 12 Q8 9 13 12" stroke="#dde8f5" stroke-width=".7" fill="none"/></svg>
<div class="t" style="left:1499px;top:103.4px;font-size:12px;color:#d0d0d0">OctaneSky</div>
<div class="a" style="left:1596px;top:103.2px;width:12px;height:13px;background:linear-gradient(135deg,#7a7a7a 46%,#5a5a5a 50%,#7a7a7a 54%);border-radius:1px"></div>
<div class="a" style="left:1612px;top:103.2px;width:5px;height:5px;border-radius:50%;background:#6a6a6a"></div>
<div class="a" style="left:1612px;top:111.2px;width:5px;height:5px;border-radius:50%;background:#6a6a6a"></div>
<svg class="a" style="left:1634px;top:100px" width="17" height="17" viewBox="0 0 17 17"><rect width="17" height="17" fill="#1a2028"/><circle cx="8.5" cy="8.5" r="6.5" fill="#111" stroke="#4aa8ff" stroke-width="1.2"/><path d="M8.5 2 A6.5 6.5 0 0 0 8.5 15Z" fill="#3a9cff"/></svg>
<div class="a" style="left:1471px;top:129.7px;width:8px;height:1px;background:#aaa"></div>
<div class="a" style="left:1481px;top:124px;width:14px;height:10px;background:#e8e8e8;border-radius:1px"></div>
<div class="t" style="left:1499px;top:123.9px;font-size:12px;color:#d0d0d0">OctaneLight</div>
<div class="a" style="left:1596px;top:123.7px;width:12px;height:13px;background:linear-gradient(135deg,#7a7a7a 46%,#5a5a5a 50%,#7a7a7a 54%);border-radius:1px"></div>
<div class="a" style="left:1612px;top:123.7px;width:5px;height:5px;border-radius:50%;background:#6a6a6a"></div>
<div class="a" style="left:1612px;top:131.7px;width:5px;height:5px;border-radius:50%;background:#6a6a6a"></div>
<svg class="a" style="left:1619px;top:124px" width="11" height="10" viewBox="0 0 11 10"><path d="M1 5 L4 8.5 L10 1" fill="none" stroke="#48c890" stroke-width="1.6"/></svg>
<div class="a" style="left:1634px;top:120px;width:17px;height:17px;border-radius:4px;background:radial-gradient(#6a5a40,#2a2620)"><div class="a" style="left:3px;top:5px;width:11px;height:6px;border-radius:2px;background:#fff8ea"></div></div>
<svg class="a" style="left:1654px;top:120px" width="17" height="17" viewBox="0 0 17 17"><circle cx="8.5" cy="8.5" r="7" fill="none" stroke="#9ac0ff" stroke-width="1.4"/><circle cx="8.5" cy="8.5" r="4" fill="none" stroke="#9ac0ff" stroke-width="1.2"/><circle cx="8.5" cy="8.5" r="1.4" fill="#9ac0ff"/><circle cx="8.5" cy="8.5" r="8" fill="none" stroke="#223" stroke-width=".8"/></svg>
<div class="a" style="left:1471px;top:150.1px;width:8px;height:1px;background:#aaa"></div>
<svg class="a" style="left:1481px;top:142px" width="16" height="16" viewBox="0 0 16 16"><path d="M2 2 V14 H14" fill="none" stroke="#eee" stroke-width="1.6"/><text x="8" y="10" font-family="Liberation Sans" font-weight="bold" font-size="10" fill="#bfe0ff">0</text></svg>
<div class="t" style="left:1499px;top:144.3px;font-size:12px;color:#d0d0d0">LightTarget</div>
<div class="a" style="left:1596px;top:144.1px;width:12px;height:13px;background:linear-gradient(135deg,#7a7a7a 46%,#5a5a5a 50%,#7a7a7a 54%);border-radius:1px"></div>
<div class="a" style="left:1612px;top:144.1px;width:5px;height:5px;border-radius:50%;background:#6a6a6a"></div>
<div class="a" style="left:1612px;top:152.1px;width:5px;height:5px;border-radius:50%;background:#6a6a6a"></div>
<div class="a" style="left:1471px;top:170.5px;width:8px;height:1px;background:#aaa"></div>
<svg class="a" style="left:1481px;top:162px" width="17" height="18" viewBox="0 0 17 18"><defs><linearGradient id="dl" x1="0" y1="0" x2="1" y2="1"><stop offset="0" stop-color="#111"/><stop offset="1" stop-color="#fff"/></linearGradient></defs><rect width="17" height="18" fill="url(#dl)"/><path d="M4 14 L14 4" stroke="#111" stroke-width="2"/><path d="M11 3 L15 2 L14 6Z" fill="#111"/></svg>
<div class="t" style="left:1499px;top:164.7px;font-size:12px;color:#d0d0d0">OctaneDayLight</div>
<div class="a" style="left:1596px;top:164.5px;width:12px;height:13px;background:linear-gradient(135deg,#7a7a7a 46%,#5a5a5a 50%,#7a7a7a 54%);border-radius:1px"></div>
<div class="a" style="left:1612px;top:164.5px;width:5px;height:5px;border-radius:50%;background:#6a6a6a"></div>
<div class="a" style="left:1612px;top:172.5px;width:5px;height:5px;border-radius:50%;background:#6a6a6a"></div>
<svg class="a" style="left:1619px;top:165px" width="11" height="10" viewBox="0 0 11 10"><path d="M1 5 L4 8.5 L10 1" fill="none" stroke="#48c890" stroke-width="1.6"/></svg>
<svg class="a" style="left:1634px;top:161px" width="17" height="17" viewBox="0 0 17 17"><rect width="17" height="17" rx="4" fill="#262626"/><circle cx="8.5" cy="8.5" r="3" fill="#f8a020"/><g stroke="#f0a030" stroke-width="1.4" stroke-linecap="round"><path d="M8.5 2 V3.5 M8.5 13.5 V15 M2 8.5 H3.5 M13.5 8.5 H15 M4 4 L5 5 M12 12 L13 13 M4 13 L5 12 M12 5 L13 4"/></g></svg>
<svg class="a" style="left:1654px;top:161px" width="17" height="17" viewBox="0 0 17 17"><circle cx="8.5" cy="8.5" r="7.5" fill="none" stroke="#eee" stroke-width="2" stroke-dasharray="1.8 1"/><circle cx="8.5" cy="8.5" r="5" fill="#f4f4f4"/></svg>
<div class="a" style="left:1471px;top:190.9px;width:8px;height:1px;background:#aaa"></div>
<svg class="a" style="left:1481px;top:182px" width="18" height="16" viewBox="0 0 18 16"><circle cx="5" cy="4" r="2.5" fill="#eee" stroke="#111"/><circle cx="11" cy="4" r="2.5" fill="#eee" stroke="#111"/><rect x="2" y="8" width="11" height="6" fill="#111"/><path d="M13 10 L17 8 V14 L13 12Z" fill="#111"/></svg>
<div class="t" style="left:1499px;top:185.1px;font-size:12px;color:#d0d0d0">OctaneCamera.1</div>
<div class="a" style="left:1596px;top:184.9px;width:12px;height:13px;background:linear-gradient(135deg,#7a7a7a 46%,#5a5a5a 50%,#7a7a7a 54%);border-radius:1px"></div>
<div class="a" style="left:1612px;top:184.9px;width:5px;height:5px;border-radius:50%;background:#6a6a6a"></div>
<div class="a" style="left:1612px;top:192.9px;width:5px;height:5px;border-radius:50%;background:#6a6a6a"></div>
<svg class="a" style="left:1619px;top:184px" width="12" height="12" viewBox="0 0 12 12"><path d="M1 4 V1 H4 M8 1 H11 V4 M11 8 V11 H8 M4 11 H1 V8" fill="none" stroke="#ddd" stroke-width="1.2"/><path d="M6 3.5 V8.5 M3.5 6 H8.5" stroke="#ddd" stroke-width="1"/></svg>
<svg class="a" style="left:1634px;top:181px" width="17" height="17" viewBox="0 0 17 17"><rect width="17" height="17" rx="4" fill="#262626"/><path d="M3 6 H6 L7 4 H11 L12 6 H14 V13 H3Z" fill="#f05020"/><circle cx="8.5" cy="9.5" r="2" fill="#262626"/></svg>
<div class="a" style="left:1471px;top:211.3px;width:8px;height:1px;background:#aaa"></div>
<div class="a" style="left:1466px;top:206px;width:11px;height:11px;border:1px solid #aaa;background:#4a4a4a"><div class="a" style="left:2px;top:4px;width:5px;height:1px;background:#ccc"></div></div>
<svg class="a" style="left:1481px;top:203px" width="16" height="16" viewBox="0 0 16 16"><path d="M2 2 V14 H14" fill="none" stroke="#eee" stroke-width="1.6"/><text x="8" y="10" font-family="Liberation Sans" font-weight="bold" font-size="10" fill="#bfe0ff">0</text></svg>
<div class="t" style="left:1499px;top:205.5px;font-size:12px;color:#d8883a">空白</div>
<div class="a" style="left:1596px;top:205.3px;width:12px;height:13px;background:linear-gradient(135deg,#7a7a7a 46%,#5a5a5a 50%,#7a7a7a 54%);border-radius:1px"></div>
<div class="a" style="left:1612px;top:205.3px;width:5px;height:5px;border-radius:50%;background:#6a6a6a"></div>
<div class="a" style="left:1612px;top:213.3px;width:5px;height:5px;border-radius:50%;background:#6a6a6a"></div>
<div class="a" style="left:1482px;top:231.8px;width:8px;height:1px;background:#aaa"></div>
<svg class="a" style="left:1492px;top:223px" width="12" height="18" viewBox="0 0 12 18"><rect x="1" y="2" width="10" height="14" rx="3" fill="#8cc0f0" stroke="#4a7ab0" stroke-width=".6"/><ellipse cx="6" cy="3.5" rx="4.5" ry="2" fill="#c8e4ff"/></svg>
<div class="t" style="left:1510px;top:225.9px;font-size:12px;color:#d0d0d0">圆柱</div>
<div class="a" style="left:1596px;top:225.8px;width:12px;height:13px;background:linear-gradient(135deg,#7a7a7a 46%,#5a5a5a 50%,#7a7a7a 54%);border-radius:1px"></div>
<div class="a" style="left:1612px;top:225.8px;width:5px;height:5px;border-radius:50%;background:#6a6a6a"></div>
<div class="a" style="left:1612px;top:233.8px;width:5px;height:5px;border-radius:50%;background:#6a6a6a"></div>
<svg class="a" style="left:1619px;top:226px" width="11" height="10" viewBox="0 0 11 10"><path d="M1 5 L4 8.5 L10 1" fill="none" stroke="#48c890" stroke-width="1.6"/></svg>
<svg class="a" style="left:1634px;top:222px" width="18" height="18" viewBox="0 0 18 18"><circle cx="5" cy="5" r="3.8" fill="#c08040" stroke="#6a4020" stroke-width=".6"/><circle cx="12" cy="12" r="3.8" fill="#c08040" stroke="#6a4020" stroke-width=".6"/></svg>
<div class="a" style="left:1482px;top:252.2px;width:8px;height:1px;background:#aaa"></div>
<div class="a" style="left:1477px;top:247px;width:11px;height:11px;border:1px solid #aaa;background:#4a4a4a"><div class="a" style="left:2px;top:4px;width:5px;height:1px;background:#ccc"></div></div>
<svg class="a" style="left:1492px;top:244px" width="18" height="18" viewBox="0 0 18 18"><circle cx="9" cy="9" r="6.5" fill="#40c070"/><path d="M5 7 L12 5 L13 12 L6 13Z" fill="#7ae0a0" opacity=".8"/><path d="M2 2 h2 M14 2 h2 M2 16 h2 M14 16 h2" stroke="#ccc" stroke-width=".8"/></svg>
<div class="t" style="left:1510px;top:246.4px;font-size:12px;color:#d0d0d0">细分曲面</div>
<div class="a" style="left:1596px;top:246.2px;width:12px;height:13px;background:linear-gradient(135deg,#7a7a7a 46%,#5a5a5a 50%,#7a7a7a 54%);border-radius:1px"></div>
<div class="a" style="left:1612px;top:246.2px;width:5px;height:5px;border-radius:50%;background:#6a6a6a"></div>
<div class="a" style="left:1612px;top:254.2px;width:5px;height:5px;border-radius:50%;background:#6a6a6a"></div>
<svg class="a" style="left:1619px;top:247px" width="11" height="10" viewBox="0 0 11 10"><path d="M1 5 L4 8.5 L10 1" fill="none" stroke="#48c890" stroke-width="1.6"/></svg>
<div class="a" style="left:1493px;top:272.6px;width:8px;height:1px;background:#aaa"></div>
<svg class="a" style="left:1503px;top:264px" width="18" height="16" viewBox="0 0 18 16"><path d="M9 2 L16 14 H2Z" fill="#8cc4f4"/><circle cx="9" cy="2.5" r="1.8" fill="#fff"/><circle cx="2.5" cy="14" r="1.8" fill="#fff"/><circle cx="15.5" cy="14" r="1.8" fill="#fff"/></svg>
<div class="t" style="left:1521px;top:266.8px;font-size:12px;color:#d0d0d0">圆柱</div>
<div class="a" style="left:1596px;top:266.6px;width:12px;height:13px;background:linear-gradient(135deg,#7a7a7a 46%,#5a5a5a 50%,#7a7a7a 54%);border-radius:1px"></div>
<div class="a" style="left:1612px;top:266.6px;width:5px;height:5px;border-radius:50%;background:#6a6a6a"></div>
<div class="a" style="left:1612px;top:274.6px;width:5px;height:5px;border-radius:50%;background:#6a6a6a"></div>
<svg class="a" style="left:1634px;top:263px" width="18" height="18" viewBox="0 0 18 18"><circle cx="5" cy="5" r="3.8" fill="#c08040" stroke="#6a4020" stroke-width=".6"/><circle cx="12" cy="12" r="3.8" fill="#c08040" stroke="#6a4020" stroke-width=".6"/></svg>
<svg class="a" style="left:1654px;top:263px" width="17" height="17" viewBox="0 0 17 17"><rect x=".5" y=".5" width="16" height="16" fill="#fff" stroke="#c8804a"/><g fill="#111"><rect x="2" y="2" width="4" height="4"/><rect x="10" y="2" width="4" height="4"/><rect x="6" y="6" width="4" height="4"/><rect x="2" y="10" width="4" height="4"/><rect x="10" y="10" width="4" height="4"/></g></svg>
<div class="a" style="left:1493px;top:293.0px;width:8px;height:1px;background:#aaa"></div>
<svg class="a" style="left:1503px;top:285px" width="18" height="16" viewBox="0 0 18 16"><path d="M9 2 L16 14 H2Z" fill="#8cc4f4"/><circle cx="9" cy="2.5" r="1.8" fill="#fff"/><circle cx="2.5" cy="14" r="1.8" fill="#fff"/><circle cx="15.5" cy="14" r="1.8" fill="#fff"/></svg>
<div class="t" style="left:1521px;top:287.2px;font-size:12px;color:#d0d0d0">圆柱.1</div>
<div class="a" style="left:1596px;top:287.0px;width:12px;height:13px;background:linear-gradient(135deg,#7a7a7a 46%,#5a5a5a 50%,#7a7a7a 54%);border-radius:1px"></div>
<div class="a" style="left:1612px;top:287.0px;width:5px;height:5px;border-radius:50%;background:#6a6a6a"></div>
<div class="a" style="left:1612px;top:295.0px;width:5px;height:5px;border-radius:50%;background:#6a6a6a"></div>
<svg class="a" style="left:1634px;top:284px" width="18" height="18" viewBox="0 0 18 18"><circle cx="5" cy="5" r="3.8" fill="#c08040" stroke="#6a4020" stroke-width=".6"/><circle cx="12" cy="12" r="3.8" fill="#c08040" stroke="#6a4020" stroke-width=".6"/></svg>
<svg class="a" style="left:1654px;top:284px" width="17" height="17" viewBox="0 0 17 17"><rect x=".5" y=".5" width="16" height="16" fill="#fff" stroke="#c8804a"/><g fill="#111"><rect x="2" y="2" width="4" height="4"/><rect x="10" y="2" width="4" height="4"/><rect x="6" y="6" width="4" height="4"/><rect x="2" y="10" width="4" height="4"/><rect x="10" y="10" width="4" height="4"/></g></svg>
<div class="a" style="left:1482px;top:313.4px;width:8px;height:1px;background:#aaa"></div>
<div class="a" style="left:1477px;top:308px;width:11px;height:11px;border:1px solid #aaa;background:#4a4a4a"><div class="a" style="left:2px;top:4px;width:5px;height:1px;background:#ccc"></div></div>
<svg class="a" style="left:1492px;top:305px" width="16" height="20" viewBox="0 0 16 20"><circle cx="8" cy="4" r="2.5" fill="#111"/><path d="M2 8 L6 6 H10 L14 8 L13 12 L12 11 V18 H4 V11 L3 12Z" fill="#50d08a"/></svg>
<div class="t" style="left:1510px;top:307.6px;font-size:12px;color:#d0d0d0">布料曲面</div>
<div class="a" style="left:1596px;top:307.4px;width:12px;height:13px;background:linear-gradient(135deg,#7a7a7a 46%,#5a5a5a 50%,#7a7a7a 54%);border-radius:1px"></div>
<div class="a" style="left:1612px;top:307.4px;width:5px;height:5px;border-radius:50%;background:#6a6a6a"></div>
<div class="a" style="left:1612px;top:315.4px;width:5px;height:5px;border-radius:50%;background:#6a6a6a"></div>
<svg class="a" style="left:1619px;top:308px" width="11" height="10" viewBox="0 0 11 10"><path d="M1 1 L10 9 M10 1 L1 9" fill="none" stroke="#e07040" stroke-width="2"/></svg>
<div class="a" style="left:1493px;top:333.8px;width:8px;height:1px;background:#aaa"></div>
<div class="a" style="left:1488px;top:328px;width:11px;height:11px;border:1px solid #aaa;background:#4a4a4a"><div class="a" style="left:2px;top:4px;width:5px;height:1px;background:#ccc"></div></div>
<svg class="a" style="left:1503px;top:325px" width="18" height="16" viewBox="0 0 18 16"><path d="M9 2 L16 14 H2Z" fill="#8cc4f4"/><circle cx="9" cy="2.5" r="1.8" fill="#fff"/><circle cx="2.5" cy="14" r="1.8" fill="#fff"/><circle cx="15.5" cy="14" r="1.8" fill="#fff"/></svg>
<div class="t" style="left:1521px;top:328.0px;font-size:12px;color:#d0d0d0">球体</div>
<div class="a" style="left:1596px;top:327.8px;width:12px;height:13px;background:linear-gradient(135deg,#7a7a7a 46%,#5a5a5a 50%,#7a7a7a 54%);border-radius:1px"></div>
<div class="a" style="left:1612px;top:327.8px;width:5px;height:5px;border-radius:50%;background:#6a6a6a"></div>
<div class="a" style="left:1612px;top:335.8px;width:5px;height:5px;border-radius:50%;background:#6a6a6a"></div>
<svg class="a" style="left:1634px;top:324px" width="18" height="18" viewBox="0 0 18 18"><circle cx="5" cy="5" r="3.8" fill="#c08040" stroke="#6a4020" stroke-width=".6"/><circle cx="12" cy="12" r="3.8" fill="#c08040" stroke="#6a4020" stroke-width=".6"/></svg>
<svg class="a" style="left:1654px;top:324px" width="17" height="17" viewBox="0 0 17 17"><rect x=".5" y=".5" width="16" height="16" fill="#fff" stroke="#c8804a"/><g fill="#111"><rect x="2" y="2" width="4" height="4"/><rect x="10" y="2" width="4" height="4"/><rect x="6" y="6" width="4" height="4"/><rect x="2" y="10" width="4" height="4"/><rect x="10" y="10" width="4" height="4"/></g></svg>
<svg class="a" style="left:1674px;top:324px" width="19" height="19" viewBox="0 0 19 19"><rect x=".5" y=".5" width="18" height="18" fill="#1e2620" stroke="#1e2620" stroke-width="1.2"/><circle cx="9" cy="10" r="6" fill="#48c828"/><circle cx="11" cy="8" r="3" fill="#7ae050" opacity=".7"/></svg>
<svg class="a" style="left:1694px;top:324px" width="19" height="19" viewBox="0 0 19 19"><rect width="19" height="19" fill="#c8c8c8"/><rect x="0" y="0" width="9" height="9" fill="#eee"/><rect x="10" y="10" width="9" height="9" fill="#e0e0e0"/><rect x="3" y="12" width="5" height="5" fill="#999"/><rect x="12" y="3" width="4" height="4" fill="#aaa"/></svg>
<div class="a" style="left:1504px;top:354.3px;width:8px;height:1px;background:#aaa"></div>
<svg class="a" style="left:1514px;top:346px" width="14" height="16" viewBox="0 0 14 16"><rect x="1" y="1" width="12" height="14" rx="3" fill="#6a8ec8"/><path d="M3 5 H11 M3 8 H11 M3 11 H11" stroke="#aac4ee" stroke-width="1"/></svg>
<div class="t" style="left:1532px;top:348.5px;font-size:12px;color:#d0d0d0">置换</div>
<div class="a" style="left:1596px;top:348.3px;width:12px;height:13px;background:linear-gradient(135deg,#7a7a7a 46%,#5a5a5a 50%,#7a7a7a 54%);border-radius:1px"></div>
<div class="a" style="left:1612px;top:348.3px;width:5px;height:5px;border-radius:50%;background:#6a6a6a"></div>
<div class="a" style="left:1612px;top:356.3px;width:5px;height:5px;border-radius:50%;background:#6a6a6a"></div>
<svg class="a" style="left:1619px;top:349px" width="11" height="10" viewBox="0 0 11 10"><path d="M1 5 L4 8.5 L10 1" fill="none" stroke="#48c890" stroke-width="1.6"/></svg>
<div class="a" style="left:1482px;top:374.7px;width:8px;height:1px;background:#aaa"></div>
<div class="a" style="left:1477px;top:369px;width:11px;height:11px;border:1px solid #aaa;background:#4a4a4a"><div class="a" style="left:2px;top:4px;width:5px;height:1px;background:#ccc"></div></div>
<svg class="a" style="left:1492px;top:366px" width="16" height="20" viewBox="0 0 16 20"><circle cx="8" cy="4" r="2.5" fill="#111"/><path d="M2 8 L6 6 H10 L14 8 L13 12 L12 11 V18 H4 V11 L3 12Z" fill="#50d08a"/></svg>
<div class="t" style="left:1510px;top:368.9px;font-size:12px;color:#f0a040">布料曲面.1</div>
<div class="a" style="left:1596px;top:368.7px;width:12px;height:13px;background:linear-gradient(135deg,#7a7a7a 46%,#5a5a5a 50%,#7a7a7a 54%);border-radius:1px"></div>
<div class="a" style="left:1612px;top:368.7px;width:5px;height:5px;border-radius:50%;background:#6a6a6a"></div>
<div class="a" style="left:1612px;top:376.7px;width:5px;height:5px;border-radius:50%;background:#6a6a6a"></div>
<svg class="a" style="left:1619px;top:369px" width="11" height="10" viewBox="0 0 11 10"><path d="M1 5 L4 8.5 L10 1" fill="none" stroke="#48c890" stroke-width="1.6"/></svg>
<svg class="a" style="left:1634px;top:365px" width="19" height="19" viewBox="0 0 19 19"><rect width="19" height="19" fill="#c8c8c8"/><rect x="0" y="0" width="9" height="9" fill="#eee"/><rect x="10" y="10" width="9" height="9" fill="#e0e0e0"/><rect x="3" y="12" width="5" height="5" fill="#999"/><rect x="12" y="3" width="4" height="4" fill="#aaa"/></svg>
<div class="a" style="left:1493px;top:395.1px;width:8px;height:1px;background:#aaa"></div>
<svg class="a" style="left:1503px;top:387px" width="12" height="18" viewBox="0 0 12 18"><rect x="1" y="2" width="10" height="14" rx="3" fill="#8cc0f0" stroke="#4a7ab0" stroke-width=".6"/><ellipse cx="6" cy="3.5" rx="4.5" ry="2" fill="#c8e4ff"/></svg>
<div class="t" style="left:1521px;top:389.3px;font-size:12px;color:#e8903a">圆柱</div>
<div class="a" style="left:1596px;top:389.1px;width:12px;height:13px;background:linear-gradient(135deg,#7a7a7a 46%,#5a5a5a 50%,#7a7a7a 54%);border-radius:1px"></div>
<div class="a" style="left:1612px;top:389.1px;width:5px;height:5px;border-radius:50%;background:#6a6a6a"></div>
<div class="a" style="left:1612px;top:397.1px;width:5px;height:5px;border-radius:50%;background:#6a6a6a"></div>
<svg class="a" style="left:1619px;top:390px" width="11" height="10" viewBox="0 0 11 10"><path d="M1 5 L4 8.5 L10 1" fill="none" stroke="#48c890" stroke-width="1.6"/></svg>
<svg class="a" style="left:1634px;top:386px" width="19" height="19" viewBox="0 0 19 19"><rect x=".5" y=".5" width="18" height="18" fill="#1e2620" stroke="#e08a40" stroke-width="1.2"/><circle cx="9" cy="10" r="6" fill="#48c828"/><circle cx="11" cy="8" r="3" fill="#7ae050" opacity=".7"/></svg>
<svg class="a" style="left:1654px;top:386px" width="18" height="18" viewBox="0 0 18 18"><circle cx="5" cy="5" r="3.8" fill="#c08040" stroke="#6a4020" stroke-width=".6"/><circle cx="12" cy="12" r="3.8" fill="#c08040" stroke="#6a4020" stroke-width=".6"/></svg>
<div class="a" style="left:1482px;top:415.5px;width:8px;height:1px;background:#aaa"></div>
<svg class="a" style="left:1492px;top:407px" width="20" height="14" viewBox="0 0 20 14"><path d="M1 8 L8 2 L19 5 L12 12Z" fill="#6aa0e0" stroke="#2a5aa0" stroke-width=".6"/><path d="M4.5 5 L15.5 8.5 M10 3.5 L6 10" stroke="#bcd8f8" stroke-width=".8"/></svg>
<div class="t" style="left:1510px;top:409.7px;font-size:12px;color:#d0d0d0">平面.1</div>
<div class="a" style="left:1596px;top:409.5px;width:12px;height:13px;background:linear-gradient(135deg,#7a7a7a 46%,#5a5a5a 50%,#7a7a7a 54%);border-radius:1px"></div>
<div class="a" style="left:1612px;top:409.5px;width:5px;height:5px;border-radius:50%;background:#6a6a6a"></div>
<div class="a" style="left:1612px;top:417.5px;width:5px;height:5px;border-radius:50%;background:#6a6a6a"></div>
<svg class="a" style="left:1619px;top:410px" width="11" height="10" viewBox="0 0 11 10"><path d="M1 5 L4 8.5 L10 1" fill="none" stroke="#48c890" stroke-width="1.6"/></svg>
<svg class="a" style="left:1634px;top:406px" width="18" height="18" viewBox="0 0 18 18"><circle cx="5" cy="5" r="3.8" fill="#c08040" stroke="#6a4020" stroke-width=".6"/><circle cx="12" cy="12" r="3.8" fill="#c08040" stroke="#6a4020" stroke-width=".6"/></svg>
<svg class="a" style="left:1654px;top:406px" width="19" height="19" viewBox="0 0 19 19"><rect x=".5" y=".5" width="18" height="18" fill="#1e2620" stroke="#1e2620" stroke-width="1.2"/><circle cx="9" cy="10" r="6" fill="#48c828"/><circle cx="11" cy="8" r="3" fill="#7ae050" opacity=".7"/></svg>
<div class="a" style="left:1482px;top:435.9px;width:8px;height:1px;background:#aaa"></div>
<svg class="a" style="left:1492px;top:427px" width="16" height="16" viewBox="0 0 16 16"><path d="M2 2 V14 H14" fill="none" stroke="#eee" stroke-width="1.6"/><text x="8" y="10" font-family="Liberation Sans" font-weight="bold" font-size="10" fill="#bfe0ff">0</text></svg>
<div class="t" style="left:1510px;top:430.1px;font-size:12px;color:#d0d0d0">LightTarget</div>
<div class="a" style="left:1596px;top:429.9px;width:12px;height:13px;background:linear-gradient(135deg,#7a7a7a 46%,#5a5a5a 50%,#7a7a7a 54%);border-radius:1px"></div>
<div class="a" style="left:1612px;top:429.9px;width:5px;height:5px;border-radius:50%;background:#6a6a6a"></div>
<div class="a" style="left:1612px;top:437.9px;width:5px;height:5px;border-radius:50%;background:#6a6a6a"></div>
<div class="a" style="left:1482px;top:456.4px;width:8px;height:1px;background:#aaa"></div>
<div class="a" style="left:1477px;top:451px;width:11px;height:11px;border:1px solid #aaa;background:#4a4a4a"><div class="a" style="left:2px;top:4px;width:5px;height:1px;background:#ccc"></div></div>
<svg class="a" style="left:1492px;top:448px" width="16" height="16" viewBox="0 0 16 16"><path d="M2 2 V14 H14" fill="none" stroke="#eee" stroke-width="1.6"/><text x="8" y="10" font-family="Liberation Sans" font-weight="bold" font-size="10" fill="#bfe0ff">0</text></svg>
<div class="t" style="left:1510px;top:450.6px;font-size:12px;color:#d0d0d0">修容笔</div>
<div class="a" style="left:1596px;top:450.4px;width:12px;height:13px;background:linear-gradient(135deg,#7a7a7a 46%,#5a5a5a 50%,#7a7a7a 54%);border-radius:1px"></div>
<div class="a" style="left:1612px;top:450.4px;width:5px;height:5px;border-radius:50%;background:#6a6a6a"></div>
<div class="a" style="left:1612px;top:458.4px;width:5px;height:5px;border-radius:50%;background:#6a6a6a"></div>
<svg class="a" style="left:1634px;top:447px" width="19" height="19" viewBox="0 0 19 19"><rect x=".5" y=".5" width="18" height="18" fill="#1e2620" stroke="#1e2620" stroke-width="1.2"/><circle cx="9" cy="10" r="6" fill="#48c828"/><circle cx="11" cy="8" r="3" fill="#7ae050" opacity=".7"/></svg>
<div class="a" style="left:1493px;top:476.8px;width:8px;height:1px;background:#aaa"></div>
<svg class="a" style="left:1503px;top:468px" width="18" height="16" viewBox="0 0 18 16"><path d="M9 2 L16 14 H2Z" fill="#8cc4f4"/><circle cx="9" cy="2.5" r="1.8" fill="#fff"/><circle cx="2.5" cy="14" r="1.8" fill="#fff"/><circle cx="15.5" cy="14" r="1.8" fill="#fff"/></svg>
<div class="t" style="left:1521px;top:471.0px;font-size:12px;color:#d0d0d0">圆柱</div>
<div class="a" style="left:1596px;top:470.8px;width:12px;height:13px;background:linear-gradient(135deg,#7a7a7a 46%,#5a5a5a 50%,#7a7a7a 54%);border-radius:1px"></div>
<div class="a" style="left:1612px;top:470.8px;width:5px;height:5px;border-radius:50%;background:#6a6a6a"></div>
<div class="a" style="left:1612px;top:478.8px;width:5px;height:5px;border-radius:50%;background:#6a6a6a"></div>
<svg class="a" style="left:1634px;top:467px" width="18" height="18" viewBox="0 0 18 18"><circle cx="5" cy="5" r="3.8" fill="#c08040" stroke="#6a4020" stroke-width=".6"/><circle cx="12" cy="12" r="3.8" fill="#c08040" stroke="#6a4020" stroke-width=".6"/></svg>
<svg class="a" style="left:1654px;top:467px" width="17" height="17" viewBox="0 0 17 17"><rect x=".5" y=".5" width="16" height="16" fill="#fff" stroke="#c8804a"/><g fill="#111"><rect x="2" y="2" width="4" height="4"/><rect x="10" y="2" width="4" height="4"/><rect x="6" y="6" width="4" height="4"/><rect x="2" y="10" width="4" height="4"/><rect x="10" y="10" width="4" height="4"/></g></svg>
<svg class="a" style="left:1674px;top:467px" width="19" height="19" viewBox="0 0 19 19"><rect width="19" height="19" fill="#e8e0d8"/><circle cx="9.5" cy="9.5" r="8" fill="#8a5030"/><path d="M4 11 Q9 7 15 11" stroke="#e8d0b0" stroke-width="1.2" fill="none"/><circle cx="8" cy="5" r="1.5" fill="#fff"/></svg>
<div class="a" style="left:1493px;top:497.2px;width:8px;height:1px;background:#aaa"></div>
<div class="a" style="left:1488px;top:492px;width:11px;height:11px;border:1px solid #aaa;background:#4a4a4a"><div class="a" style="left:2px;top:4px;width:5px;height:1px;background:#ccc"></div></div>
<svg class="a" style="left:1503px;top:489px" width="18" height="18" viewBox="0 0 18 18"><circle cx="9" cy="9" r="6.5" fill="#40c070"/><path d="M5 7 L12 5 L13 12 L6 13Z" fill="#7ae0a0" opacity=".8"/><path d="M2 2 h2 M14 2 h2 M2 16 h2 M14 16 h2" stroke="#ccc" stroke-width=".8"/></svg>
<div class="t" style="left:1521px;top:491.4px;font-size:12px;color:#d0d0d0">细分曲面</div>
<div class="a" style="left:1596px;top:491.2px;width:12px;height:13px;background:linear-gradient(135deg,#7a7a7a 46%,#5a5a5a 50%,#7a7a7a 54%);border-radius:1px"></div>
<div class="a" style="left:1612px;top:491.2px;width:5px;height:5px;border-radius:50%;background:#6a6a6a"></div>
<div class="a" style="left:1612px;top:499.2px;width:5px;height:5px;border-radius:50%;background:#6a6a6a"></div>
<svg class="a" style="left:1619px;top:492px" width="11" height="10" viewBox="0 0 11 10"><path d="M1 5 L4 8.5 L10 1" fill="none" stroke="#48c890" stroke-width="1.6"/></svg>
<div class="a" style="left:1504px;top:517.6px;width:8px;height:1px;background:#aaa"></div>
<div class="a" style="left:1499px;top:512px;width:11px;height:11px;border:1px solid #aaa;background:#4a4a4a"><div class="a" style="left:2px;top:4px;width:5px;height:1px;background:#ccc"></div></div>
<svg class="a" style="left:1514px;top:509px" width="16" height="16" viewBox="0 0 16 16"><path d="M2 2 V14 H14" fill="none" stroke="#eee" stroke-width="1.6"/><text x="8" y="10" font-family="Liberation Sans" font-weight="bold" font-size="10" fill="#bfe0ff">0</text></svg>
<div class="t" style="left:1532px;top:511.8px;font-size:12px;color:#d0d0d0">空白</div>
<div class="a" style="left:1596px;top:511.6px;width:12px;height:13px;background:linear-gradient(135deg,#7a7a7a 46%,#5a5a5a 50%,#7a7a7a 54%);border-radius:1px"></div>
<div class="a" style="left:1612px;top:511.6px;width:5px;height:5px;border-radius:50%;background:#6a6a6a"></div>
<div class="a" style="left:1612px;top:519.6px;width:5px;height:5px;border-radius:50%;background:#6a6a6a"></div>
<div class="a" style="left:1504px;top:538.1px;width:8px;height:1px;background:#aaa"></div>
<svg class="a" style="left:1514px;top:530px" width="18" height="16" viewBox="0 0 18 16"><path d="M9 2 L16 14 H2Z" fill="#8cc4f4"/><circle cx="9" cy="2.5" r="1.8" fill="#fff"/><circle cx="2.5" cy="14" r="1.8" fill="#fff"/><circle cx="15.5" cy="14" r="1.8" fill="#fff"/></svg>
<div class="t" style="left:1532px;top:532.3px;font-size:12px;color:#d0d0d0"></div>
<div class="a" style="left:1596px;top:532.1px;width:12px;height:13px;background:linear-gradient(135deg,#7a7a7a 46%,#5a5a5a 50%,#7a7a7a 54%);border-radius:1px"></div>
<div class="a" style="left:1612px;top:532.1px;width:5px;height:5px;border-radius:50%;background:#6a6a6a"></div>
<div class="a" style="left:1612px;top:540.1px;width:5px;height:5px;border-radius:50%;background:#6a6a6a"></div>
<svg class="a" style="left:1634px;top:529px" width="18" height="18" viewBox="0 0 18 18"><circle cx="5" cy="5" r="3.8" fill="#c08040" stroke="#6a4020" stroke-width=".6"/><circle cx="12" cy="12" r="3.8" fill="#c08040" stroke="#6a4020" stroke-width=".6"/></svg>
<svg class="a" style="left:1654px;top:529px" width="17" height="17" viewBox="0 0 17 17"><rect x=".5" y=".5" width="16" height="16" fill="#fff" stroke="#c8804a"/><g fill="#111"><rect x="2" y="2" width="4" height="4"/><rect x="10" y="2" width="4" height="4"/><rect x="6" y="6" width="4" height="4"/><rect x="2" y="10" width="4" height="4"/><rect x="10" y="10" width="4" height="4"/></g></svg>
<svg class="a" style="left:1674px;top:529px" width="19" height="19" viewBox="0 0 19 19"><rect width="19" height="19" fill="#c8c8c8"/><rect x="0" y="0" width="9" height="9" fill="#eee"/><rect x="10" y="10" width="9" height="9" fill="#e0e0e0"/><rect x="3" y="12" width="5" height="5" fill="#999"/><rect x="12" y="3" width="4" height="4" fill="#aaa"/></svg>
</div></div>
<div class="a" style="left:1592px;top:78px;width:1px;height:453px;background:#3c3c3c"></div>
<div class="a" style="left:1631px;top:78px;width:1px;height:453px;background:#3c3c3c"></div>
<div class="a" style="left:1880px;top:78px;width:16px;height:453px;background:#474747"></div>
<div class="a" style="left:1883px;top:81px;width:12px;height:450px;border-radius:6px;background:#363636"></div>
<div class="a" style="left:1884px;top:92px;width:10px;height:250px;border-radius:5px;background:#5a5a5a"></div>
<svg class="a" style="left:1884px;top:82px" width="10" height="8" viewBox="0 0 10 8"><path d="M5 0 L10 8 H0Z" fill="#aaa"/></svg>
<svg class="a" style="left:1884px;top:520px" width="10" height="8" viewBox="0 0 10 8"><path d="M0 0 H10 L5 8Z" fill="#aaa"/></svg>
<div class="a" style="left:1462px;top:532px;width:436px;height:5px;background:#3e3e3e"></div>
<div class="a" style="left:1896px;top:46px;width:24px;height:1014px;background:#474747"></div>
<div class="a" style="left:1896px;top:46px;width:1px;height:491px;background:#3a3a3a"></div>
<div class="a" style="left:1896px;top:663px;width:1px;height:397px;background:#3a3a3a"></div>
<div class="a" style="left:1897px;top:52px;width:21px;height:33px;background:#5a5a5a;border-radius:0 3px 3px 0;overflow:hidden"><div class="t" style="left:17px;top:5px;transform:rotate(90deg);transform-origin:0 0;font-size:11px;color:#f0a838">对象</div></div>
<div class="a" style="left:1897px;top:86px;width:21px;height:35px;background:#3e3e3e;border-radius:0 3px 3px 0;overflow:hidden"><div class="t" style="left:17px;top:6px;transform:rotate(90deg);transform-origin:0 0;font-size:11px;color:#9a9a9a">场次</div></div>
<div class="a" style="left:1897px;top:122px;width:21px;height:66px;background:#3e3e3e;border-radius:0 3px 3px 0;overflow:hidden"><div class="t" style="left:17px;top:5px;transform:rotate(90deg);transform-origin:0 0;font-size:11px;color:#9a9a9a">内容浏览器</div></div>
<div class="a" style="left:1897px;top:190px;width:21px;height:33px;background:#3e3e3e;border-radius:0 3px 3px 0;overflow:hidden"><div class="t" style="left:17px;top:5px;transform:rotate(90deg);transform-origin:0 0;font-size:11px;color:#9a9a9a">构造</div></div>
<div class="a" style="left:1897px;top:665px;width:21px;height:30px;background:#5a5a5a;border-radius:0 3px 3px 0;overflow:hidden"><div class="t" style="left:17px;top:4px;transform:rotate(90deg);transform-origin:0 0;font-size:11px;color:#f0a838">属性</div></div>
<div class="a" style="left:1897px;top:696px;width:21px;height:25px;background:#3e3e3e;border-radius:0 3px 3px 0;overflow:hidden"><div class="t" style="left:17px;top:7px;transform:rotate(90deg);transform-origin:0 0;font-size:11px;color:#9a9a9a">层</div></div>
<div class="a" style="left:1462px;top:537px;width:456px;height:122px;border:1px solid #5a5a5a;border-right-color:#3a3a3a;background:#474747"></div>
<div class="a" style="left:1467px;top:543px;width:12px;height:11px;background:repeating-conic-gradient(#a8a8a8 0 25%,#262626 0 50%) 0 0/2px 2px"></div>
<div class="t" style="left:1486px;top:542px;font-size:12px;color:#cfcfcf">位置</div>
<div class="t" style="left:1631px;top:542px;font-size:12px;color:#cfcfcf">尺寸</div>
<div class="t" style="left:1776px;top:542px;font-size:12px;color:#cfcfcf">旋转</div>
<div class="a" style="left:1463px;top:557px;width:454px;height:1px;background:#3a3a3a"></div>
<div class="t" style="left:1466px;top:568.0px;font-size:12px;color:#bbb">X</div>
<div class="a" style="left:1477px;top:565.0px;width:135px;height:19px;background:#333;border-radius:2px;box-shadow:inset 0 1px 0 #262626"></div>
<div class="t" style="left:1482px;top:568.0px;font-size:12px;color:#d4d4d4">-310.676 cm</div>
<svg class="a" style="left:1605px;top:569px" width="6" height="12" viewBox="0 0 6 12"><path d="M0 5 L3 1 L6 5Z M0 7 L3 11 L6 7Z" fill="#888"/></svg>
<div class="t" style="left:1616px;top:568.0px;font-size:12px;color:#bbb">X</div>
<div class="a" style="left:1627px;top:565.0px;width:135px;height:19px;background:#333;border-radius:2px;box-shadow:inset 0 1px 0 #262626"></div>
<div class="t" style="left:1632px;top:568.0px;font-size:12px;color:#d4d4d4">459.322 cm</div>
<svg class="a" style="left:1755px;top:569px" width="6" height="12" viewBox="0 0 6 12"><path d="M0 5 L3 1 L6 5Z M0 7 L3 11 L6 7Z" fill="#888"/></svg>
<div class="t" style="left:1766px;top:568.0px;font-size:12px;color:#bbb">H</div>
<div class="a" style="left:1777px;top:565.0px;width:135px;height:19px;background:#333;border-radius:2px;box-shadow:inset 0 1px 0 #262626"></div>
<div class="t" style="left:1782px;top:568.0px;font-size:12px;color:#d4d4d4">0 °</div>
<svg class="a" style="left:1905px;top:569px" width="6" height="12" viewBox="0 0 6 12"><path d="M0 5 L3 1 L6 5Z M0 7 L3 11 L6 7Z" fill="#888"/></svg>
<div class="t" style="left:1466px;top:591.3px;font-size:12px;color:#bbb">Y</div>
<div class="a" style="left:1477px;top:588.3px;width:135px;height:19px;background:#333;border-radius:2px;box-shadow:inset 0 1px 0 #262626"></div>
<div class="t" style="left:1482px;top:591.3px;font-size:12px;color:#d4d4d4">143.146 cm</div>
<svg class="a" style="left:1605px;top:592px" width="6" height="12" viewBox="0 0 6 12"><path d="M0 5 L3 1 L6 5Z M0 7 L3 11 L6 7Z" fill="#888"/></svg>
<div class="t" style="left:1616px;top:591.3px;font-size:12px;color:#bbb">Y</div>
<div class="a" style="left:1627px;top:588.3px;width:135px;height:19px;background:#333;border-radius:2px;box-shadow:inset 0 1px 0 #262626"></div>
<div class="t" style="left:1632px;top:591.3px;font-size:12px;color:#d4d4d4">36.593 cm</div>
<svg class="a" style="left:1755px;top:592px" width="6" height="12" viewBox="0 0 6 12"><path d="M0 5 L3 1 L6 5Z M0 7 L3 11 L6 7Z" fill="#888"/></svg>
<div class="t" style="left:1766px;top:591.3px;font-size:12px;color:#bbb">P</div>
<div class="a" style="left:1777px;top:588.3px;width:135px;height:19px;background:#333;border-radius:2px;box-shadow:inset 0 1px 0 #262626"></div>
<div class="t" style="left:1782px;top:591.3px;font-size:12px;color:#d4d4d4">90 °</div>
<svg class="a" style="left:1905px;top:592px" width="6" height="12" viewBox="0 0 6 12"><path d="M0 5 L3 1 L6 5Z M0 7 L3 11 L6 7Z" fill="#888"/></svg>
<div class="t" style="left:1466px;top:614.6px;font-size:12px;color:#bbb">Z</div>
<div class="a" style="left:1477px;top:611.6px;width:135px;height:19px;background:#333;border-radius:2px;box-shadow:inset 0 1px 0 #262626"></div>
<div class="t" style="left:1482px;top:614.6px;font-size:12px;color:#d4d4d4">71.597 cm</div>
<svg class="a" style="left:1605px;top:615px" width="6" height="12" viewBox="0 0 6 12"><path d="M0 5 L3 1 L6 5Z M0 7 L3 11 L6 7Z" fill="#888"/></svg>
<div class="t" style="left:1616px;top:614.6px;font-size:12px;color:#bbb">Z</div>
<div class="a" style="left:1627px;top:611.6px;width:135px;height:19px;background:#333;border-radius:2px;box-shadow:inset 0 1px 0 #262626"></div>
<div class="t" style="left:1632px;top:614.6px;font-size:12px;color:#d4d4d4">264.901 cm</div>
<svg class="a" style="left:1755px;top:615px" width="6" height="12" viewBox="0 0 6 12"><path d="M0 5 L3 1 L6 5Z M0 7 L3 11 L6 7Z" fill="#888"/></svg>
<div class="t" style="left:1766px;top:614.6px;font-size:12px;color:#bbb">B</div>
<div class="a" style="left:1777px;top:611.6px;width:135px;height:19px;background:#333;border-radius:2px;box-shadow:inset 0 1px 0 #262626"></div>
<div class="t" style="left:1782px;top:614.6px;font-size:12px;color:#d4d4d4">0 °</div>
<svg class="a" style="left:1905px;top:615px" width="6" height="12" viewBox="0 0 6 12"><path d="M0 5 L3 1 L6 5Z M0 7 L3 11 L6 7Z" fill="#888"/></svg>
<div class="a" style="left:1477px;top:638px;width:135px;height:18px;border-radius:3px;background:linear-gradient(#727272,#626262);border:1px solid #3c3c3c"></div>
<div class="t" style="left:1484px;top:641px;font-size:12px;color:#dcdcdc">对象 (相对)</div>
<svg class="a" style="left:1596px;top:645px" width="10" height="6" viewBox="0 0 10 6"><path d="M0 0 H10 L5 6Z" fill="#ddd"/></svg>
<div class="a" style="left:1627px;top:638px;width:135px;height:18px;border-radius:3px;background:linear-gradient(#727272,#626262);border:1px solid #3c3c3c"></div>
<div class="t" style="left:1634px;top:641px;font-size:12px;color:#dcdcdc">绝对尺寸</div>
<svg class="a" style="left:1746px;top:645px" width="10" height="6" viewBox="0 0 10 6"><path d="M0 0 H10 L5 6Z" fill="#ddd"/></svg>
<div class="a" style="left:1777px;top:638px;width:135px;height:18px;border-radius:9px;background:linear-gradient(#727272,#626262);border:1px solid #3c3c3c"></div>
<div class="t" style="left:1835px;top:641px;font-size:12px;color:#dcdcdc">应用</div>
<div class="a" style="left:1462px;top:659px;width:458px;height:4px;background:#3a3a3a"></div>
<div class="a" style="left:1462px;top:663px;width:435px;height:397px;border:1px solid #5a5a5a;border-right-color:#3a3a3a;border-bottom:none;background:#474747"></div>
<div class="a" style="left:1468px;top:669px;width:12px;height:12px;background:repeating-conic-gradient(#a8a8a8 0 25%,#262626 0 50%) 0 0/2px 2px"></div>
<div class="t" style="left:1489px;top:669px;font-size:12px;color:#cfcfcf">模式</div>
<div class="t" style="left:1525px;top:669px;font-size:12px;color:#cfcfcf">编辑</div>
<div class="t" style="left:1561px;top:669px;font-size:12px;color:#cfcfcf">用户数据</div>
<div class="a" style="left:1463px;top:688px;width:433px;height:1px;background:#5a5a5a"></div>
<svg class="a" style="left:1745px;top:665px" width="148" height="22" viewBox="0 0 148 22"><path d="M6 11 L17 5 L14 11 L17 17Z" fill="#1e1e1e"/><path d="M19 13 L34 9" stroke="#555" stroke-width="1.5"/><path d="M57 3 L63 18 L57 14 L51 18Z" fill="#1e1e1e"/><g fill="none" stroke="#262626" stroke-width="1.6"><circle cx="81" cy="8" r="4.5"/><path d="M84 11 L89 17"/><path d="M101 9 V6 A4 4 0 0 1 109 6"/><rect x="99" y="10" width="10" height="9"/><circle cx="123" cy="11" r="7"/><circle cx="123" cy="11" r="3.5"/><rect x="134" y="3" width="13" height="15"/><path d="M140.5 7 V15 M136.5 11 H144.5"/></g></svg>
<svg class="a" style="left:1469px;top:692px" width="16" height="20" viewBox="0 0 16 20"><circle cx="8" cy="4" r="2.5" fill="#111"/><path d="M2 8 L6 6 H10 L14 8 L13 12 L12 11 V18 H4 V11 L3 12Z" fill="#50d08a"/></svg>
<div class="t" style="left:1491px;top:696px;font-size:12px;color:#c8c8c8">布料曲面 [布料曲面.1]</div>
<div class="a" style="left:1466px;top:716px;width:29px;height:21px;background:#636363;border:1px solid #3a3a3a;border-radius:2px"></div>
<div class="t" style="left:1469px;top:720px;font-size:12px;color:#d0d0d0">基本</div>
<div class="a" style="left:1496px;top:716px;width:29px;height:21px;background:#636363;border:1px solid #3a3a3a;border-radius:2px"></div>
<div class="t" style="left:1499px;top:720px;font-size:12px;color:#d0d0d0">坐标</div>
<div class="a" style="left:1526px;top:716px;width:29px;height:21px;background:#93b4e0;border:1px solid #3a3a3a;border-radius:2px"></div>
<div class="t" style="left:1529px;top:720px;font-size:12px;color:#1e2a40">对象</div>
<div class="a" style="left:1465px;top:742px;width:426px;height:18px;background:#3a3a3a"></div>
<div class="t" style="left:1467px;top:745px;font-size:12px;color:#d0d0d0">对象属性</div>
<div class="a" style="left:1467px;top:769px;width:13px;height:13px;border-radius:50%;border:2px solid #6a6a6a;background:#555"></div>
<div class="t" style="left:1485px;top:770px;font-size:12px;color:#c8c8c8">细分数</div>
<div class="a" style="left:1523px;top:766px;width:65px;height:19px;background:#333;border-radius:2px"></div>
<div class="t" style="left:1528px;top:770px;font-size:12px;color:#d4d4d4">0</div>
<svg class="a" style="left:1582px;top:770px" width="6" height="12" viewBox="0 0 6 12"><path d="M0 5 L3 1 L6 5Z M0 7 L3 11 L6 7Z" fill="#888"/></svg>
<div class="a" style="left:1467px;top:792px;width:13px;height:13px;border-radius:50%;border:2px solid #6a6a6a;background:#555"></div>
<div class="t" style="left:1485px;top:793px;font-size:12px;color:#c8c8c8">因子 .</div>
<div class="a" style="left:1523px;top:789px;width:65px;height:19px;background:#333;border-radius:2px"></div>
<div class="t" style="left:1528px;top:793px;font-size:12px;color:#d4d4d4">100 %</div>
<svg class="a" style="left:1582px;top:793px" width="6" height="12" viewBox="0 0 6 12"><path d="M0 5 L3 1 L6 5Z M0 7 L3 11 L6 7Z" fill="#888"/></svg>
<div class="a" style="left:1592px;top:792px;width:13px;height:13px;border-radius:50%;border:2px solid #6a6a6a;background:#555"></div>
<div class="t" style="left:1610px;top:793px;font-size:12px;color:#c8c8c8">限制</div>
<div class="a" style="left:1637px;top:791px;width:11px;height:11px;border-radius:3px;background:linear-gradient(#777,#5a5a5a)"></div>
<div class="a" style="left:1467px;top:815px;width:13px;height:13px;border-radius:50%;border:2px solid #6a6a6a;background:#555"></div>
<div class="t" style="left:1485px;top:816px;font-size:12px;color:#c8c8c8">厚度 .</div>
<div class="a" style="left:1523px;top:812px;width:65px;height:19px;background:#333;border-radius:2px"></div>
<div class="t" style="left:1528px;top:816px;font-size:12px;color:#d4d4d4">2 cm</div>
<svg class="a" style="left:1582px;top:816px" width="6" height="12" viewBox="0 0 6 12"><path d="M0 5 L3 1 L6 5Z M0 7 L3 11 L6 7Z" fill="#888"/></svg>
<div class="a" style="left:1592px;top:815px;width:13px;height:13px;border-radius:50%;border:2px solid #6a6a6a;background:#555"></div>
<div class="t" style="left:1610px;top:816px;font-size:12px;color:#c8c8c8">膨胀</div>
<div class="a" style="left:1637px;top:814px;width:11px;height:11px;border-radius:3px;background:linear-gradient(#777,#5a5a5a)"></div>
<div class="a" style="left:1890px;top:690px;width:6px;height:370px;background:#474747"></div>
<div class="a" style="left:712px;top:97px;width:12px;height:12px;background:repeating-conic-gradient(#a8a8a8 0 25%,#262626 0 50%) 0 0/2px 2px"></div>
<div class="t" style="left:733px;top:98px;font-size:12px;color:#cfcfcf">查看</div>
<div class="t" style="left:769px;top:98px;font-size:12px;color:#cfcfcf">摄像机</div>
<div class="t" style="left:816px;top:98px;font-size:12px;color:#cfcfcf">显示</div>
<div class="t" style="left:852px;top:98px;font-size:12px;color:#eee">选项</div>
<div class="t" style="left:888px;top:98px;font-size:12px;color:#cfcfcf">过滤</div>
<div class="t" style="left:924px;top:98px;font-size:12px;color:#cfcfcf">面板</div>
<div class="t" style="left:960px;top:98px;font-size:12px;color:#ecdcb0">ProRender</div>
<svg class="a" style="left:1392px;top:96px" width="62" height="17" viewBox="0 0 62 17"><g fill="#1e1e1e"><path d="M8 1 L10 5 H6Z M8 15 L10 11 H6Z M1 8 L5 6 V10Z M15 8 L11 6 V10Z"/><path d="M23 1 L27 6 H24.5 V10 H27 L23 15 L19 10 H21.5 V6 H19Z"/></g><circle cx="40" cy="8" r="5.5" fill="none" stroke="#1e1e1e" stroke-width="2"/><rect x="49" y="2" width="12" height="13" fill="none" stroke="#2a2a2a" stroke-width="1.5"/><path d="M49 8 H55 V15" fill="none" stroke="#2a2a2a" stroke-width="1.2"/></svg>
<svg class="a" style="left:707px;top:115px" width="752" height="266" viewBox="0 0 752 266">
<defs><linearGradient id="cyl" x1="0" x2="1"><stop offset="0" stop-color="#5a6066"/><stop offset=".55" stop-color="#c4cacf"/><stop offset=".8" stop-color="#a8aeb4"/><stop offset="1" stop-color="#6a7076"/></linearGradient>
<linearGradient id="lg" x1="0" y1="0" x2="0" y2="1"><stop offset="0" stop-color="#b8bec2"/><stop offset="1" stop-color="#aeb4b8"/></linearGradient></defs>
<rect width="752" height="266" fill="#5b6269"/>
<rect x="0" y="94" width="752" height="172" fill="#5a6167"/>
<path d="M0 0 H336 L338 266 H0Z" fill="url(#lg)"/>
<rect x="186" y="0" width="150" height="266" fill="#b9bfc3" opacity=".5"/>
<g stroke="#3c4248" stroke-width="1" opacity=".55">
<path d="M336 128 L752 142 M336 133 L752 145 M336 137 L752 163 M336 143 L752 176 M336 152 L752 195 M336 162 L752 224 M336 185 L752 266 M400 260 L752 150 M560 245 L752 151"/></g>
<path d="M336 94 H752" stroke="#8a9298" stroke-width="1.2"/>
<path d="M50 0 L130 80" stroke="#e8eef0" stroke-width="1.2"/>
<path d="M253 0 L319 80" stroke="#e8eef0" stroke-width="1.2"/>
<path d="M127 0 L148 80" stroke="#5ac890" stroke-width="1.4"/>
<path d="M316 0 L330 80" stroke="#5ac890" stroke-width="1.4"/>
<path d="M172 47 L186 80 H173Z" fill="#1818d8"/>
<path d="M732 0 L656 266" stroke="#f0f4f6" stroke-width="1.4"/>
<path d="M601 121 H623 L580 266 H560Z" fill="url(#cyl)"/>
<path d="M586 194 L607 195" stroke="#4a5056" stroke-width="1"/>
<g stroke="#fff" stroke-width="1.5"><path d="M713 240 L727 252 M727 240 L713 252 M720 238 V254 M711 246 H729"/></g>
<rect x="4" y="4" width="46" height="17" rx="2" fill="#9aa0a5" opacity=".8"/>
<text x="7" y="17" font-family="Liberation Sans" font-size="11.5" fill="#e8eaec">透视视图</text>
</svg>
<div class="a" style="left:363px;top:381px;width:1097px;height:679px;background:#fff"></div>
<div class="a" style="left:363px;top:381px;width:1097px;height:679px;overflow:hidden"><div class="a" style="left:-363px;top:-381px;width:1920px;height:1080px">
<svg class="a" style="left:373px;top:388px" width="14" height="16" viewBox="0 0 14 16"><rect x="1" y="1" width="11" height="14" fill="#fde58a" stroke="#e8c040" stroke-width=".8"/><rect x="3" y="3" width="7" height="9" fill="#f8d060" opacity=".6"/></svg>
<div class="a" style="left:394px;top:390px;width:1px;height:12px;background:#777"></div>
<div class="a" style="left:363px;top:412px;width:41px;height:23px;background:#1a63b5"></div>
<div class="t" style="left:379px;top:417px;font-size:12.5px;color:#fff">文件</div>
<div class="a" style="left:363px;top:437px;width:41px;height:1px;background:#ddd"></div>
<svg class="a" style="left:375px;top:455px" width="14" height="12" viewBox="0 0 14 12"><path d="M13 6 H2 M6 1 L1 6 L6 11" fill="none" stroke="#666" stroke-width="1.4"/></svg>
<div class="a" style="left:363px;top:883px;width:41px;height:24px;background:#d9d9d9"></div>
<svg class="a" style="left:388px;top:505px" width="14" height="14" viewBox="0 0 14 14"><path d="M7 1 L9 5.5 L13.5 6 L10 9 L11 13.5 L7 11 L3 13.5 L4 9 L.5 6 L5 5.5Z" fill="#2a7ad8"/></svg>
<div class="a" style="left:395px;top:532px;width:10px;height:10px;background:#2b86d8"></div>
<svg class="a" style="left:392px;top:554px" width="14" height="14" viewBox="0 0 14 14"><path d="M5 0 H9 V7 H13 L7 13 L1 7 H5Z" fill="#2a7ad8"/></svg>
<svg class="a" style="left:395px;top:578px" width="10" height="14" viewBox="0 0 10 14"><rect x=".5" y=".5" width="9" height="13" fill="#fff" stroke="#888"/><path d="M2 4 H8 M2 7 H8 M2 10 H8" stroke="#6a8ab0" stroke-width=".8"/></svg>
<svg class="a" style="left:395px;top:604px" width="11" height="11" viewBox="0 0 11 11"><rect x=".5" y=".5" width="10" height="10" fill="#fff" stroke="#888"/><path d="M1 9 L4 5 L7 8 L10 6 V10 H1Z" fill="#5a6a7a"/></svg>
<svg class="a" style="left:386px;top:636px" width="16" height="11" viewBox="0 0 16 11"><path d="M3 10 A3 3 0 0 1 3 4 A4 4 0 0 1 10 2 A3.5 3.5 0 0 1 15 6 A2.5 2.5 0 0 1 14 10Z" fill="#2a7ad8"/></svg>
<svg class="a" style="left:387px;top:668px" width="18" height="14" viewBox="0 0 18 14"><rect x="1" y="1" width="16" height="10" fill="#6ab8f0" stroke="#2a6ab0"/><path d="M6 13 H12" stroke="#555" stroke-width="1.5"/></svg>
<svg class="a" style="left:395px;top:693px" width="10" height="14" viewBox="0 0 10 14"><rect width="10" height="14" fill="#333"/><rect x="3" y="2" width="4" height="10" fill="#8ab"/></svg>
<svg class="a" style="left:395px;top:718px" width="11" height="11" viewBox="0 0 11 11"><rect x=".5" y=".5" width="10" height="10" fill="#fff" stroke="#888"/><path d="M1 9 L4 5 L7 8 L10 6 V10 H1Z" fill="#5a6a7a"/></svg>
<svg class="a" style="left:395px;top:741px" width="10" height="14" viewBox="0 0 10 14"><rect x=".5" y=".5" width="9" height="13" fill="#fff" stroke="#888"/><path d="M2 4 H8 M2 7 H8 M2 10 H8" stroke="#6a8ab0" stroke-width=".8"/></svg>
<svg class="a" style="left:392px;top:766px" width="14" height="14" viewBox="0 0 14 14"><path d="M5 0 H9 V7 H13 L7 13 L1 7 H5Z" fill="#2a7ad8"/></svg>
<svg class="a" style="left:393px;top:790px" width="12" height="14" viewBox="0 0 12 14"><path d="M8 1 V10 A2.5 2.5 0 1 1 6 8 V1Z" fill="#2a7ad8"/></svg>
<div class="a" style="left:395px;top:817px;width:10px;height:10px;background:#2b86d8"></div>
<svg class="a" style="left:389px;top:838px" width="10" height="10" viewBox="0 0 10 10"><g fill="#2a7ad8"><rect width="4" height="4"/><rect x="5" width="4" height="4"/><rect y="5" width="4" height="4"/><rect x="5" y="5" width="4" height="4"/></g></svg>
<svg class="a" style="left:394px;top:848px" width="12" height="6" viewBox="0 0 12 6"><rect width="12" height="5" fill="#444"/><rect y="4" width="12" height="2" fill="#999"/></svg>
<svg class="a" style="left:394px;top:873px" width="12" height="6" viewBox="0 0 12 6"><rect width="12" height="5" fill="#444"/><rect y="4" width="12" height="2" fill="#999"/></svg>
<svg class="a" style="left:394px;top:897px" width="12" height="6" viewBox="0 0 12 6"><rect width="12" height="5" fill="#444"/><rect y="4" width="12" height="2" fill="#999"/></svg>
<svg class="a" style="left:394px;top:920px" width="12" height="6" viewBox="0 0 12 6"><rect width="12" height="5" fill="#444"/><rect y="4" width="12" height="2" fill="#999"/></svg>
<svg class="a" style="left:386px;top:945px" width="18" height="16" viewBox="0 0 18 16"><circle cx="12" cy="6" r="5" fill="#3a8ad8"/><rect x="1" y="6" width="12" height="8" fill="#6ab8f0" stroke="#2a6ab0"/></svg>
<div class="a" style="left:1341px;top:396px;width:10px;height:1px;background:#333"></div>
<div class="a" style="left:1386px;top:391px;width:10px;height:10px;border:1px solid #333"></div>
<svg class="a" style="left:1432px;top:391px" width="11" height="11" viewBox="0 0 11 11"><path d="M0 0 L11 11 M11 0 L0 11" stroke="#333" stroke-width="1.1"/></svg>
<svg class="a" style="left:1423px;top:423px" width="9" height="6" viewBox="0 0 9 6"><path d="M0 0 L4.5 4.5 L9 0" fill="none" stroke="#777" stroke-width="1.2"/></svg>
<div class="a" style="left:1440px;top:417px;width:16px;height:16px;border-radius:50%;background:#1a5fb4"></div>
<div class="t" style="left:1444px;top:419px;font-size:12px;font-weight:bold;color:#fff">?</div>
<div class="a" style="left:1267px;top:439px;width:193px;height:1px;background:#e5e5e5"></div>
<div class="a" style="left:1240px;top:445px;width:208px;height:31px;border:1px solid #d9d9d9;background:#fff"></div>
<svg class="a" style="left:1263px;top:454px" width="10" height="10" viewBox="0 0 10 10"><circle cx="5" cy="5" r="4" fill="none" stroke="#666" stroke-width="1.2"/></svg>
<div class="t" style="left:1287px;top:454px;font-size:12.5px;color:#6a6a6a">搜索"4.美妆案例（光影笔）"</div>
<svg class="a" style="left:1240px;top:529px" width="86" height="60" viewBox="0 0 86 60"><rect x="0" y="1" width="84" height="56" fill="#222"/><rect x="2" y="3" width="45" height="52" fill="#f4ece4"/><rect x="47" y="3" width="26" height="52" fill="#8e8e8e"/><rect x="52" y="14" width="12" height="14" fill="#eee"/><g fill="#eee"><rect x="74" y="4" width="8" height="7"/><rect x="74" y="14" width="8" height="7"/><rect x="74" y="24" width="8" height="7"/><rect x="74" y="34" width="8" height="7"/></g><rect x="30" y="14" width="12" height="2" fill="#222"/><rect x="30" y="20" width="3" height="22" fill="#c07a50"/><rect x="37" y="20" width="3" height="22" fill="#c07a50"/><rect x="28" y="44" width="16" height="4" fill="#d08a60"/><rect x="68" y="44" width="16" height="14" fill="#6ab0e8"/><circle cx="73" cy="51" r="6" fill="#f08a30" stroke="#fff" stroke-width="1.2"/><path d="M71 48 L76 51 L71 54Z" fill="#fff"/></svg>
<div class="t" style="left:1267px;top:592px;font-size:13px;color:#222">渲染</div>
<div class="a" style="left:1435px;top:1054px;width:20px;height:6px;border:1px solid #5aa0d8;background:#d8ecfa"></div>
</div></div>
<div class="a" style="left:404px;top:196px;width:863px;height:786px;background:#f5fbff;box-shadow:0 4px 14px rgba(0,0,0,.25)"></div>
<svg class="a" style="left:416px;top:202px" width="16" height="17" viewBox="0 0 16 17"><rect x="1" y="1" width="14" height="15" rx="1.5" fill="#fff" stroke="#e0a020" stroke-width="1.2"/><rect x="0" y="1" width="3" height="15" fill="#e84a2a"/><rect x="13" y="1" width="3" height="15" fill="#3aa0e8"/><rect x="4" y="4" width="8" height="9" fill="none" stroke="#2a7ad8" stroke-width="1.3"/><path d="M6 7 H10 M6 10 H10" stroke="#2a7ad8" stroke-width="1"/></svg>
<div class="t" style="left:438px;top:204px;font-size:12.5px;color:#333">6.tif（750×1400像素, 3.03MB）- 2345看图王 - 第2/5张 50%</div>
<svg class="a" style="left:1078px;top:204px" width="14" height="14" viewBox="0 0 14 14"><path d="M1 3 H13 M1 7 H13 M1 11 H13" stroke="#555" stroke-width="1.2"/></svg>
<svg class="a" style="left:1109px;top:203px" width="17" height="15" viewBox="0 0 17 15"><path d="M5 1 L1 4 L3 7 L4 6.5 V14 H13 V6.5 L14 7 L16 4 L12 1 Q8.5 4 5 1Z" fill="none" stroke="#222" stroke-width="1.3"/></svg>
<svg class="a" style="left:1142px;top:203px" width="15" height="15" viewBox="0 0 15 15"><path d="M1 5 V1 H5 M10 1 H14 V5 M14 10 V14 H10 M5 14 H1 V10 M2 2 L6 6 M13 2 L9 6 M13 13 L9 9 M2 13 L6 9" fill="none" stroke="#333" stroke-width="1.3"/></svg>
<div class="a" style="left:1175px;top:213px;width:12px;height:2px;background:#888"></div>
<div class="a" style="left:1206px;top:204px;width:14px;height:14px;border:2px solid #222;border-top-width:2.5px"></div>
<svg class="a" style="left:1241px;top:204px" width="14" height="14" viewBox="0 0 14 14"><path d="M1 1 L13 13 M13 1 L1 13" stroke="#444" stroke-width="1.4"/></svg>
<svg class="a" style="left:683px;top:226px;box-shadow:0 0 3px rgba(0,0,0,.25)" width="377" height="714" viewBox="0 0 377 714">
<defs>
<linearGradient id="shd" gradientUnits="userSpaceOnUse" x1="0" y1="0" x2="203" y2="146">
<stop offset="0" stop-color="#bcaa98"/><stop offset="0.5" stop-color="#c2b09e"/><stop offset="0.62" stop-color="#d0bfae"/><stop offset="0.72" stop-color="#e5d7c8"/><stop offset="0.82" stop-color="#eee2d4"/><stop offset="1" stop-color="#f1e5d7"/></linearGradient>
<linearGradient id="cap" x1="0" x2="1" y1="0" y2="0">
<stop offset="0" stop-color="#c86a3c"/><stop offset="0.08" stop-color="#ea9a68"/><stop offset="0.2" stop-color="#8a4222"/><stop offset="0.3" stop-color="#6a3018"/><stop offset="0.42" stop-color="#d48352"/><stop offset="0.58" stop-color="#fbd8bc"/><stop offset="0.68" stop-color="#d8875a"/><stop offset="0.8" stop-color="#743820"/><stop offset="0.9" stop-color="#d27038"/><stop offset="1" stop-color="#b05a30"/></linearGradient>
<linearGradient id="body1" x1="0" x2="1" y1="0" y2="0">
<stop offset="0" stop-color="#c9bfb6"/><stop offset="0.2" stop-color="#ebe4dd"/><stop offset="0.55" stop-color="#ddd5ce"/><stop offset="0.85" stop-color="#e6ded7"/><stop offset="1" stop-color="#bfb3a9"/></linearGradient>
<linearGradient id="body2" x1="0" x2="1" y1="0" y2="0">
<stop offset="0" stop-color="#cfc6bd"/><stop offset="0.25" stop-color="#f1ece7"/><stop offset="0.6" stop-color="#e6e0da"/><stop offset="0.9" stop-color="#efe9e4"/><stop offset="1" stop-color="#c2b7ad"/></linearGradient>
<linearGradient id="band" x1="0" x2="0" y1="0" y2="1">
<stop offset="0" stop-color="#d99477"/><stop offset="0.35" stop-color="#cf7f5f"/><stop offset="1" stop-color="#c47556"/></linearGradient>
<radialGradient id="drop" cx="0.45" cy="0.55" r="0.6">
<stop offset="0" stop-color="#f3ebe4"/><stop offset="0.7" stop-color="#e9ddd3"/><stop offset="1" stop-color="#b98f7a"/></radialGradient>
<linearGradient id="floor" x1="0" x2="0" y1="0" y2="1"><stop offset="0" stop-color="#e9ddd1"/><stop offset=".25" stop-color="#efe6dc"/><stop offset="1" stop-color="#ede3d8"/></linearGradient>
</defs>
<rect width="377" height="714" fill="#f0e4d6"/>
<filter id="bl1" x="-50%" y="-50%" width="200%" height="200%"><feGaussianBlur stdDeviation="9"/></filter><filter id="bl2" x="-50%" y="-50%" width="200%" height="200%"><feGaussianBlur stdDeviation="28"/></filter><path d="M-40 -40 L222 -40 L-40 330Z" fill="#c1af9d" filter="url(#bl1)"/><path d="M-40 150 L90 150 L-40 420Z" fill="#c9b8a7" opacity=".7" filter="url(#bl2)"/>
<rect y="632" width="377" height="82" fill="url(#floor)"/>
<path d="M377 355 A160 160 0 0 0 368 641" fill="none" stroke="#8a7f78" stroke-width="1"/>
<path d="M377 345 A172 172 0 0 0 376 646" fill="none" stroke="#9a8f88" stroke-width="1"/>
<path d="M27 597 L337 598 Q352 599 352 614 L352 636 Q350 645 330 648 Q280 654 250 652 Q190 648 157 634 L27 631 Q12 630 12 614 Q12 598 27 597Z" fill="url(#band)"/>
<path d="M22 600 Q180 594 346 601" stroke="#e3a78b" stroke-width="1.5" fill="none"/>
<path d="M160 636 Q230 646 300 643 Q340 640 351 632" stroke="#e0a080" stroke-width="1" fill="none" opacity=".8"/>
<rect x="144" y="232" width="38" height="111" rx="2" fill="url(#cap)"/><ellipse cx="163" cy="233.5" rx="18" ry="2" fill="#e8a47c" opacity=".7"/>
<rect x="144" y="343" width="37" height="245" fill="url(#body1)"/>
<rect x="212" y="243" width="37" height="108" rx="2" fill="url(#cap)"/><ellipse cx="230.5" cy="244.5" rx="17.5" ry="2" fill="#e8a47c" opacity=".7"/>
<rect x="215" y="351" width="35" height="237" fill="url(#body2)"/>
<rect x="146" y="582" width="33" height="8" rx="2" fill="#e2ad95"/>
<rect x="217" y="582" width="31" height="8" rx="2" fill="#e2ad95"/>
<g fill="none" stroke="#fff" stroke-width="1.4">
<circle cx="162" cy="460" r="13"/><circle cx="162" cy="485" r="12.5"/><circle cx="162" cy="510" r="13"/><circle cx="162" cy="485" r="4"/><circle cx="161" cy="511" r="8"/></g>
<g fill="none" stroke="#a8a098" stroke-width=".6" opacity=".7"><circle cx="158" cy="462" r="10"/><circle cx="158" cy="512" r="10"/></g>
<g fill="none" stroke="#8e4028" stroke-width="1.2">
<circle cx="233" cy="466" r="12.5"/><circle cx="233" cy="491" r="12.5"/><circle cx="233" cy="517" r="12.5"/><circle cx="232" cy="491" r="4"/><circle cx="231" cy="518" r="8"/></g>
<g fill="none" stroke="#f6f2ee" stroke-width="1.1">
<line x1="144" y1="371" x2="181" y2="371"/><line x1="144" y1="404" x2="181" y2="404"/><line x1="215" y1="380" x2="250" y2="380"/><line x1="215" y1="412" x2="250" y2="412"/></g>
<text x="146" y="361" font-family="Liberation Sans" font-size="8.5" font-weight="bold" fill="#fbf8f4" textLength="34">-OF-OFF</text>
<text x="145" y="391" font-family="Liberation Sans" font-size="7.5" font-weight="bold" fill="#fbf8f4">R HIGHLIG</text>
<text x="216" y="371" font-family="Liberation Sans" font-size="7.5" font-weight="bold" fill="#8e4028">-OF-OFF</text>
<text x="215" y="399" font-family="Liberation Sans" font-size="7.5" font-weight="bold" fill="#8e4028">R HIGHLIG</text>
<defs><linearGradient id="dropg" x1="0" y1="0" x2="0.3" y2="1"><stop offset="0" stop-color="#d7ad98"/><stop offset=".35" stop-color="#eadbd2"/><stop offset="1" stop-color="#f3eeea"/></linearGradient></defs>
<path d="M66 553 Q78 544 96 552 Q116 566 114 584 Q110 597 88 600 Q70 602 62 592 Q55 580 58 566 Q60 557 66 553Z" fill="url(#dropg)" stroke="#a89088" stroke-width=".7"/>
<path d="M63 558 Q55 575 62 592 Q66 598 72 600" stroke="#5a6670" stroke-width="1.3" fill="none"/>
<circle cx="74" cy="599" r="3" fill="#fff"/><circle cx="86" cy="562" r="1.5" fill="#fff"/>
</svg>
<svg class="a" style="left:1843px;top:3px" width="12" height="12" viewBox="0 0 12 12"><path d="M3 3 V1 H11 V9 H9" fill="none" stroke="#888" stroke-width="1"/><rect x="1" y="3" width="8" height="8" fill="#fff" stroke="#888" stroke-width="1"/></svg>
<svg class="a" style="left:1889px;top:3px" width="12" height="12" viewBox="0 0 12 12"><path d="M1 1 L11 11 M11 1 L1 11" stroke="#888" stroke-width="1"/></svg>
<div class="a" style="left:1462px;top:24px;width:458px;height:27px;background:#474747"></div>
<div class="a" style="left:1815px;top:26px;width:80px;height:20px;background:#3e3e3e;border-radius:2px"></div>
<svg class="a" style="left:1883px;top:31px" width="10" height="8" viewBox="0 0 10 8"><path d="M0 0 H10 L5 7Z" fill="#aaa"/></svg>
<svg class="a" style="left:1903px;top:27px" width="14" height="16" viewBox="0 0 14 16"><circle cx="5.5" cy="5.5" r="4.2" fill="none" stroke="#1e1e1e" stroke-width="1.6"/><path d="M8.5 8.5 L13 14" stroke="#1e1e1e" stroke-width="2"/></svg>
<div class="a" style="left:1707px;top:27px;width:105px;height:26px;border-radius:4px;background:#bfe6fb;border:1px solid #2a8ae0;overflow:hidden"><div class="a" style="left:0;top:0;width:31px;height:26px;background:#2a98ee"></div></div>
<svg class="a" style="left:1713px;top:31px" width="22" height="18" viewBox="0 0 22 18"><circle cx="8" cy="7" r="4.5" fill="none" stroke="#fff" stroke-width="2.2"/><circle cx="13" cy="11" r="4.5" fill="none" stroke="#fff" stroke-width="2.2"/></svg>
<div class="t" style="left:1752px;top:34px;font-size:12px;color:#3a8ad8">拍摄上传</div>
<svg class="a" style="left:1688px;top:18px" width="232" height="52" viewBox="0 0 232 52"><g fill="none" stroke="rgba(205,205,205,.5)" stroke-width="3.6" stroke-linecap="round" stroke-linejoin="round"><path d="M4 8 Q14 6 16 18 Q10 36 16 44 Q30 48 58 46"/><path d="M40 4 V12 M24 12 H62 M28 12 V44 M34 20 H58 M40 20 V30 Q40 40 50 40 H60"/><path d="M70 4 V10 M66 10 H104 M70 10 V40 Q66 48 62 48 M82 18 Q82 36 76 42 M90 18 V44 H104 V36"/><path d="M118 6 V46 M128 6 H160 V26 H128Z M128 16 H160 M144 6 V46 M124 34 H164 M144 34 L126 48 M144 34 L164 48"/><path d="M176 6 V46 M176 6 H220 V46 Q220 50 212 48 M186 18 L198 36 M198 18 L186 36 M202 18 L214 36 M214 18 L202 36"/></g></svg>
<svg class="a" style="left:1118px;top:636px" width="14" height="22" viewBox="0 0 14 22"><path d="M1 1 V17 L5 13 L8 20 L10.5 19 L7.5 12 H13Z" fill="#fff" stroke="#111" stroke-width="1.1" stroke-linejoin="round"/></svg>
</body></html>
